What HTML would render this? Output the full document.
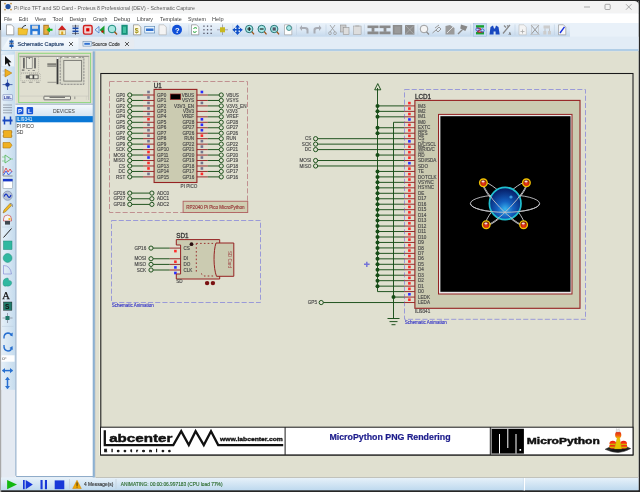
<!DOCTYPE html>
<html><head><meta charset="utf-8"><style>
html,body{margin:0;padding:0;background:#262626;}
svg{display:block;font-family:"Liberation Sans", sans-serif;will-change:transform;}
</style></head><body>
<svg width="640" height="492" viewBox="0 0 640 492">
<rect x="0" y="0" width="640" height="492" fill="#262626" />
<rect x="1" y="1" width="637.5" height="489" fill="#eef3f9" />
<rect x="1" y="1" width="637.5" height="12.5" fill="#f3f3f3" />
<path d="M634.5,1 H638.5 V5 Q638.5,1 634.5,1 Z" fill="#262626"/>
<text x="14" y="9.6" font-size="5.3" fill="#5a5a5a" text-anchor="start" textLength="181" lengthAdjust="spacingAndGlyphs" >Pi Pico TFT and SD Card - Proteus 8 Professional (DEV) - Schematic Capture</text>
<circle cx="8" cy="6.6" r="2.6" fill="#2050a0"/>
<circle cx="5" cy="3.5999999999999996" r="0.9" fill="#c09040"/>
<circle cx="11" cy="3.5999999999999996" r="0.9" fill="#c09040"/>
<circle cx="5" cy="9.6" r="0.9" fill="#c09040"/>
<circle cx="11" cy="9.6" r="0.9" fill="#c09040"/>
<line x1="584" y1="7" x2="590" y2="7" stroke="#777" stroke-width="0.6" />
<rect x="605" y="4.3" width="5.2" height="5.2" rx="0.8" fill="none" stroke="#777" stroke-width="0.6"/>
<line x1="626" y1="4.2" x2="631.5" y2="9.7" stroke="#777" stroke-width="0.6" />
<line x1="631.5" y1="4.2" x2="626" y2="9.7" stroke="#777" stroke-width="0.6" />
<rect x="1" y="13.5" width="637.5" height="9.5" fill="#ffffff" />
<text x="4" y="20.6" font-size="5.3" fill="#404040" text-anchor="start" textLength="8.2" lengthAdjust="spacingAndGlyphs" >File</text>
<text x="18.8" y="20.6" font-size="5.3" fill="#404040" text-anchor="start" textLength="9.2" lengthAdjust="spacingAndGlyphs" >Edit</text>
<text x="34.7" y="20.6" font-size="5.3" fill="#404040" text-anchor="start" textLength="11.299999999999997" lengthAdjust="spacingAndGlyphs" >View</text>
<text x="52.5" y="20.6" font-size="5.3" fill="#404040" text-anchor="start" textLength="10.5" lengthAdjust="spacingAndGlyphs" >Tool</text>
<text x="69.4" y="20.6" font-size="5.3" fill="#404040" text-anchor="start" textLength="16.89999999999999" lengthAdjust="spacingAndGlyphs" >Design</text>
<text x="92.9" y="20.6" font-size="5.3" fill="#404040" text-anchor="start" textLength="14.399999999999991" lengthAdjust="spacingAndGlyphs" >Graph</text>
<text x="113.8" y="20.6" font-size="5.3" fill="#404040" text-anchor="start" textLength="16.39999999999999" lengthAdjust="spacingAndGlyphs" >Debug</text>
<text x="136.8" y="20.6" font-size="5.3" fill="#404040" text-anchor="start" textLength="16.19999999999999" lengthAdjust="spacingAndGlyphs" >Library</text>
<text x="160" y="20.6" font-size="5.3" fill="#404040" text-anchor="start" textLength="21.599999999999994" lengthAdjust="spacingAndGlyphs" >Template</text>
<text x="188" y="20.6" font-size="5.3" fill="#404040" text-anchor="start" textLength="18" lengthAdjust="spacingAndGlyphs" >System</text>
<text x="212" y="20.6" font-size="5.3" fill="#404040" text-anchor="start" textLength="11.599999999999994" lengthAdjust="spacingAndGlyphs" >Help</text>
<defs><linearGradient id="tb" x1="0" y1="0" x2="0" y2="1"><stop offset="0" stop-color="#eaf2fa"/><stop offset="0.5" stop-color="#dde9f5"/><stop offset="1" stop-color="#c4d8ec"/></linearGradient></defs>
<rect x="1" y="23" width="637.5" height="28" fill="#e9f1f9" />
<rect x="1" y="36.7" width="637.5" height="12.5" fill="#e2ecf6" />
<rect x="1" y="23.2" width="569" height="13.5" fill="url(#tb)" />
<rect x="1" y="49" width="637.5" height="2.3" fill="#b0cde6" />
<defs><linearGradient id="at" x1="0" y1="0" x2="0" y2="1"><stop offset="0" stop-color="#f8fbfe"/><stop offset="1" stop-color="#e8f1f9"/></linearGradient></defs>
<path d="M1.2,50 L9,38 L78.4,38 L78.4,50 Z" fill="url(#at)"/>
<rect x="79" y="38.6" width="55.2" height="10.4" rx="1.2" fill="#e6ebf1"/>
<text x="17.5" y="46.3" font-size="5.4" fill="#1d3a66" text-anchor="start" textLength="46.5" lengthAdjust="spacingAndGlyphs"  stroke="#1d3a66" stroke-width="0.15">Schematic Capture</text>
<text x="92" y="46.3" font-size="5.4" fill="#333" text-anchor="start" textLength="28" lengthAdjust="spacingAndGlyphs"  stroke="#333" stroke-width="0.12">Source Code</text>
<line x1="69" y1="42" x2="73" y2="46" stroke="#333" stroke-width="0.8" />
<line x1="73" y1="42" x2="69" y2="46" stroke="#333" stroke-width="0.8" />
<line x1="125" y1="42" x2="129" y2="46" stroke="#333" stroke-width="0.8" />
<line x1="129" y1="42" x2="125" y2="46" stroke="#333" stroke-width="0.8" />
<defs><linearGradient id="lc" x1="0" y1="0" x2="1" y2="0"><stop offset="0" stop-color="#e6f0f8"/><stop offset="1" stop-color="#c6dcee"/></linearGradient><linearGradient id="dh" x1="0" y1="0" x2="0" y2="1"><stop offset="0" stop-color="#f4f8fc"/><stop offset="1" stop-color="#d4e4f2"/></linearGradient></defs>
<rect x="0" y="51.3" width="15.4" height="426.7" fill="#e4eaf2" />
<rect x="0" y="30" width="1.2" height="462" fill="#a8a8a8" />
<rect x="1.2" y="51.3" width="13.8" height="338.5" fill="url(#lc)" />
<rect x="15" y="51.3" width="80.6" height="426.7" fill="#e9eef4" />
<rect x="15.4" y="51.5" width="78.2" height="51.9" fill="#e0dfd0" />
<rect x="18.7" y="53.3" width="71.9" height="49.3" fill="none" stroke="#88d878" stroke-width="0.9"/>
<rect x="15.4" y="103.4" width="78.2" height="1.6" fill="#b8c6d4" />
<rect x="15.6" y="105" width="77.7" height="11" fill="url(#dh)" />
<rect x="16.9" y="107.1" width="6.5" height="7.2" rx="1" fill="#1a56d8"/><rect x="26.6" y="107.1" width="6.5" height="7.2" rx="1" fill="#1a56d8"/>
<text x="18.1" y="113.1" font-size="6" fill="#fff" text-anchor="start" font-weight="bold">P</text>
<text x="28.1" y="113.1" font-size="6" fill="#fff" text-anchor="start" font-weight="bold">L</text>
<text x="52.9" y="113.3" font-size="5.2" fill="#444" text-anchor="start" textLength="22" lengthAdjust="spacingAndGlyphs" >DEVICES</text>
<rect x="15.6" y="116" width="77.7" height="361" fill="#ffffff" />
<rect x="15.6" y="116.1" width="77.7" height="6.2" fill="#0a78d6" />
<text x="16.5" y="121.3" font-size="4.8" fill="#fff" text-anchor="start" textLength="16" lengthAdjust="spacingAndGlyphs" >ILI9341</text>
<text x="16.5" y="127.8" font-size="4.8" fill="#333" text-anchor="start" textLength="17.5" lengthAdjust="spacingAndGlyphs" >PI PICO</text>
<text x="16.5" y="134.3" font-size="4.8" fill="#333" text-anchor="start" textLength="7" lengthAdjust="spacingAndGlyphs" >SD</text>
<path d="M15.9,116 V475.5 Q15.9,476.6 17,476.6 H93" fill="none" stroke="#84a4c4" stroke-width="1"/>
<rect x="15.4" y="477.1" width="78" height="0.9" fill="#e4eaf2" />
<rect x="92.7" y="51.3" width="2.2" height="426.7" fill="#8cb0d2" />
<rect x="94.9" y="51.3" width="0.8" height="426.7" fill="#c4c0b4" />
<rect x="95.7" y="51.3" width="542.8" height="426.7" fill="#e0e0d0" />
<line x1="99.6" y1="73.5" x2="99.6" y2="455.4" stroke="#f2f2e4" stroke-width="1" />
<rect x="100.8" y="73.5" width="532.2" height="381.6" fill="none" stroke="#1a1a1a" stroke-width="1.05"/>
<rect x="109.5" y="81.5" width="138.0" height="131.0" fill="none" stroke="#c09090" stroke-width="1" stroke-dasharray="5.1 2.1"/>
<text x="153.8" y="88.1" font-size="6.7" fill="#333" text-anchor="start" textLength="7.9" lengthAdjust="spacingAndGlyphs"  stroke="#333" stroke-width="0.3">U1</text>
<rect x="154.1" y="89.4" width="42.8" height="93.1" fill="#cbcbb1" stroke="#952222" stroke-width="1.1"/>
<rect x="170.3" y="94" width="10.4" height="5.4" fill="#000" stroke="#952222" stroke-width="0.7"/>
<circle cx="129.75" cy="95.0" r="2.1" fill="none" stroke="#164c16" stroke-width="0.95"/>
<line x1="131.85" y1="95.0" x2="143" y2="95.0" stroke="#164c16" stroke-width="0.95" />
<line x1="143" y1="95.0" x2="154.1" y2="95.0" stroke="#952222" stroke-width="0.95" />
<rect x="147.2" y="90.7" width="2.6" height="2.6" fill="#74748e" />
<text x="125.2" y="96.6" font-size="4.6" fill="#4a4a4a" text-anchor="end"  stroke="#4a4a4a" stroke-width="0.14">GP0</text>
<text x="157" y="96.6" font-size="4.6" fill="#4a4a4a" text-anchor="start"  stroke="#4a4a4a" stroke-width="0.14">GP0</text>
<circle cx="221.25" cy="95.0" r="2.1" fill="none" stroke="#164c16" stroke-width="0.95"/>
<line x1="196.9" y1="95.0" x2="207.8" y2="95.0" stroke="#952222" stroke-width="0.95" />
<line x1="207.8" y1="95.0" x2="219.15" y2="95.0" stroke="#164c16" stroke-width="0.95" />
<rect x="200.6" y="90.7" width="2.6" height="2.6" fill="#2a2aff" />
<text x="194.2" y="96.6" font-size="4.6" fill="#4a4a4a" text-anchor="end"  stroke="#4a4a4a" stroke-width="0.14">VBUS</text>
<text x="226.3" y="96.6" font-size="4.6" fill="#4a4a4a" text-anchor="start"  stroke="#4a4a4a" stroke-width="0.14">VBUS</text>
<circle cx="129.75" cy="100.46" r="2.1" fill="none" stroke="#164c16" stroke-width="0.95"/>
<line x1="131.85" y1="100.46" x2="143" y2="100.46" stroke="#164c16" stroke-width="0.95" />
<line x1="143" y1="100.46" x2="154.1" y2="100.46" stroke="#952222" stroke-width="0.95" />
<rect x="147.2" y="96.16" width="2.6" height="2.6" fill="#74748e" />
<text x="125.2" y="102.05999999999999" font-size="4.6" fill="#4a4a4a" text-anchor="end"  stroke="#4a4a4a" stroke-width="0.14">GP1</text>
<text x="157" y="102.05999999999999" font-size="4.6" fill="#4a4a4a" text-anchor="start"  stroke="#4a4a4a" stroke-width="0.14">GP1</text>
<circle cx="221.25" cy="100.46" r="2.1" fill="none" stroke="#164c16" stroke-width="0.95"/>
<line x1="196.9" y1="100.46" x2="207.8" y2="100.46" stroke="#952222" stroke-width="0.95" />
<line x1="207.8" y1="100.46" x2="219.15" y2="100.46" stroke="#164c16" stroke-width="0.95" />
<text x="194.2" y="102.05999999999999" font-size="4.6" fill="#4a4a4a" text-anchor="end"  stroke="#4a4a4a" stroke-width="0.14">VSYS</text>
<text x="226.3" y="102.05999999999999" font-size="4.6" fill="#4a4a4a" text-anchor="start"  stroke="#4a4a4a" stroke-width="0.14">VSYS</text>
<circle cx="129.75" cy="105.92" r="2.1" fill="none" stroke="#164c16" stroke-width="0.95"/>
<line x1="131.85" y1="105.92" x2="143" y2="105.92" stroke="#164c16" stroke-width="0.95" />
<line x1="143" y1="105.92" x2="154.1" y2="105.92" stroke="#952222" stroke-width="0.95" />
<rect x="147.2" y="101.62" width="2.6" height="2.6" fill="#74748e" />
<text x="125.2" y="107.52" font-size="4.6" fill="#4a4a4a" text-anchor="end"  stroke="#4a4a4a" stroke-width="0.14">GP2</text>
<text x="157" y="107.52" font-size="4.6" fill="#4a4a4a" text-anchor="start"  stroke="#4a4a4a" stroke-width="0.14">GP2</text>
<circle cx="221.25" cy="105.92" r="2.1" fill="none" stroke="#164c16" stroke-width="0.95"/>
<line x1="196.9" y1="105.92" x2="207.8" y2="105.92" stroke="#952222" stroke-width="0.95" />
<line x1="207.8" y1="105.92" x2="219.15" y2="105.92" stroke="#164c16" stroke-width="0.95" />
<rect x="200.6" y="101.62" width="2.6" height="2.6" fill="#74748e" />
<text x="194.2" y="107.52" font-size="4.6" fill="#4a4a4a" text-anchor="end"  stroke="#4a4a4a" stroke-width="0.14">V3V3_EN</text>
<text x="226.3" y="107.52" font-size="4.6" fill="#4a4a4a" text-anchor="start"  stroke="#4a4a4a" stroke-width="0.14">V3V3_EN</text>
<circle cx="129.75" cy="111.38" r="2.1" fill="none" stroke="#164c16" stroke-width="0.95"/>
<line x1="131.85" y1="111.38" x2="143" y2="111.38" stroke="#164c16" stroke-width="0.95" />
<line x1="143" y1="111.38" x2="154.1" y2="111.38" stroke="#952222" stroke-width="0.95" />
<rect x="147.2" y="107.08" width="2.6" height="2.6" fill="#74748e" />
<text x="125.2" y="112.97999999999999" font-size="4.6" fill="#4a4a4a" text-anchor="end"  stroke="#4a4a4a" stroke-width="0.14">GP3</text>
<text x="157" y="112.97999999999999" font-size="4.6" fill="#4a4a4a" text-anchor="start"  stroke="#4a4a4a" stroke-width="0.14">GP3</text>
<circle cx="221.25" cy="111.38" r="2.1" fill="none" stroke="#164c16" stroke-width="0.95"/>
<line x1="196.9" y1="111.38" x2="207.8" y2="111.38" stroke="#952222" stroke-width="0.95" />
<line x1="207.8" y1="111.38" x2="219.15" y2="111.38" stroke="#164c16" stroke-width="0.95" />
<text x="194.2" y="112.97999999999999" font-size="4.6" fill="#4a4a4a" text-anchor="end"  stroke="#4a4a4a" stroke-width="0.14">V3V3</text>
<text x="226.3" y="112.97999999999999" font-size="4.6" fill="#4a4a4a" text-anchor="start"  stroke="#4a4a4a" stroke-width="0.14">V3V3</text>
<circle cx="129.75" cy="116.84" r="2.1" fill="none" stroke="#164c16" stroke-width="0.95"/>
<line x1="131.85" y1="116.84" x2="143" y2="116.84" stroke="#164c16" stroke-width="0.95" />
<line x1="143" y1="116.84" x2="154.1" y2="116.84" stroke="#952222" stroke-width="0.95" />
<rect x="147.2" y="112.54" width="2.6" height="2.6" fill="#74748e" />
<text x="125.2" y="118.44" font-size="4.6" fill="#4a4a4a" text-anchor="end"  stroke="#4a4a4a" stroke-width="0.14">GP4</text>
<text x="157" y="118.44" font-size="4.6" fill="#4a4a4a" text-anchor="start"  stroke="#4a4a4a" stroke-width="0.14">GP4</text>
<circle cx="221.25" cy="116.84" r="2.1" fill="none" stroke="#164c16" stroke-width="0.95"/>
<line x1="196.9" y1="116.84" x2="207.8" y2="116.84" stroke="#952222" stroke-width="0.95" />
<line x1="207.8" y1="116.84" x2="219.15" y2="116.84" stroke="#164c16" stroke-width="0.95" />
<text x="194.2" y="118.44" font-size="4.6" fill="#4a4a4a" text-anchor="end"  stroke="#4a4a4a" stroke-width="0.14">VREF</text>
<text x="226.3" y="118.44" font-size="4.6" fill="#4a4a4a" text-anchor="start"  stroke="#4a4a4a" stroke-width="0.14">VREF</text>
<circle cx="129.75" cy="122.3" r="2.1" fill="none" stroke="#164c16" stroke-width="0.95"/>
<line x1="131.85" y1="122.3" x2="143" y2="122.3" stroke="#164c16" stroke-width="0.95" />
<line x1="143" y1="122.3" x2="154.1" y2="122.3" stroke="#952222" stroke-width="0.95" />
<rect x="147.2" y="118.0" width="2.6" height="2.6" fill="#ff2a2a" />
<text x="125.2" y="123.89999999999999" font-size="4.6" fill="#4a4a4a" text-anchor="end"  stroke="#4a4a4a" stroke-width="0.14">GP5</text>
<text x="157" y="123.89999999999999" font-size="4.6" fill="#4a4a4a" text-anchor="start"  stroke="#4a4a4a" stroke-width="0.14">GP5</text>
<circle cx="221.25" cy="122.3" r="2.1" fill="none" stroke="#164c16" stroke-width="0.95"/>
<line x1="196.9" y1="122.3" x2="207.8" y2="122.3" stroke="#952222" stroke-width="0.95" />
<line x1="207.8" y1="122.3" x2="219.15" y2="122.3" stroke="#164c16" stroke-width="0.95" />
<rect x="200.6" y="118.0" width="2.6" height="2.6" fill="#2a2aff" />
<text x="194.2" y="123.89999999999999" font-size="4.6" fill="#4a4a4a" text-anchor="end"  stroke="#4a4a4a" stroke-width="0.14">GP28</text>
<text x="226.3" y="123.89999999999999" font-size="4.6" fill="#4a4a4a" text-anchor="start"  stroke="#4a4a4a" stroke-width="0.14">GP28</text>
<circle cx="129.75" cy="127.75999999999999" r="2.1" fill="none" stroke="#164c16" stroke-width="0.95"/>
<line x1="131.85" y1="127.75999999999999" x2="143" y2="127.75999999999999" stroke="#164c16" stroke-width="0.95" />
<line x1="143" y1="127.75999999999999" x2="154.1" y2="127.75999999999999" stroke="#952222" stroke-width="0.95" />
<rect x="147.2" y="123.46" width="2.6" height="2.6" fill="#74748e" />
<text x="125.2" y="129.35999999999999" font-size="4.6" fill="#4a4a4a" text-anchor="end"  stroke="#4a4a4a" stroke-width="0.14">GP6</text>
<text x="157" y="129.35999999999999" font-size="4.6" fill="#4a4a4a" text-anchor="start"  stroke="#4a4a4a" stroke-width="0.14">GP6</text>
<circle cx="221.25" cy="127.75999999999999" r="2.1" fill="none" stroke="#164c16" stroke-width="0.95"/>
<line x1="196.9" y1="127.75999999999999" x2="207.8" y2="127.75999999999999" stroke="#952222" stroke-width="0.95" />
<line x1="207.8" y1="127.75999999999999" x2="219.15" y2="127.75999999999999" stroke="#164c16" stroke-width="0.95" />
<rect x="200.6" y="123.46" width="2.6" height="2.6" fill="#2a2aff" />
<text x="194.2" y="129.35999999999999" font-size="4.6" fill="#4a4a4a" text-anchor="end"  stroke="#4a4a4a" stroke-width="0.14">GP27</text>
<text x="226.3" y="129.35999999999999" font-size="4.6" fill="#4a4a4a" text-anchor="start"  stroke="#4a4a4a" stroke-width="0.14">GP27</text>
<circle cx="129.75" cy="133.22" r="2.1" fill="none" stroke="#164c16" stroke-width="0.95"/>
<line x1="131.85" y1="133.22" x2="143" y2="133.22" stroke="#164c16" stroke-width="0.95" />
<line x1="143" y1="133.22" x2="154.1" y2="133.22" stroke="#952222" stroke-width="0.95" />
<rect x="147.2" y="128.92" width="2.6" height="2.6" fill="#74748e" />
<text x="125.2" y="134.82" font-size="4.6" fill="#4a4a4a" text-anchor="end"  stroke="#4a4a4a" stroke-width="0.14">GP7</text>
<text x="157" y="134.82" font-size="4.6" fill="#4a4a4a" text-anchor="start"  stroke="#4a4a4a" stroke-width="0.14">GP7</text>
<circle cx="221.25" cy="133.22" r="2.1" fill="none" stroke="#164c16" stroke-width="0.95"/>
<line x1="196.9" y1="133.22" x2="207.8" y2="133.22" stroke="#952222" stroke-width="0.95" />
<line x1="207.8" y1="133.22" x2="219.15" y2="133.22" stroke="#164c16" stroke-width="0.95" />
<rect x="200.6" y="128.92" width="2.6" height="2.6" fill="#2a2aff" />
<text x="194.2" y="134.82" font-size="4.6" fill="#4a4a4a" text-anchor="end"  stroke="#4a4a4a" stroke-width="0.14">GP26</text>
<text x="226.3" y="134.82" font-size="4.6" fill="#4a4a4a" text-anchor="start"  stroke="#4a4a4a" stroke-width="0.14">GP26</text>
<circle cx="129.75" cy="138.68" r="2.1" fill="none" stroke="#164c16" stroke-width="0.95"/>
<line x1="131.85" y1="138.68" x2="143" y2="138.68" stroke="#164c16" stroke-width="0.95" />
<line x1="143" y1="138.68" x2="154.1" y2="138.68" stroke="#952222" stroke-width="0.95" />
<rect x="147.2" y="134.38" width="2.6" height="2.6" fill="#74748e" />
<text x="125.2" y="140.28" font-size="4.6" fill="#4a4a4a" text-anchor="end"  stroke="#4a4a4a" stroke-width="0.14">GP8</text>
<text x="157" y="140.28" font-size="4.6" fill="#4a4a4a" text-anchor="start"  stroke="#4a4a4a" stroke-width="0.14">GP8</text>
<circle cx="221.25" cy="138.68" r="2.1" fill="none" stroke="#164c16" stroke-width="0.95"/>
<line x1="196.9" y1="138.68" x2="207.8" y2="138.68" stroke="#952222" stroke-width="0.95" />
<line x1="207.8" y1="138.68" x2="219.15" y2="138.68" stroke="#164c16" stroke-width="0.95" />
<rect x="200.6" y="134.38" width="2.6" height="2.6" fill="#ff2a2a" />
<text x="194.2" y="140.28" font-size="4.6" fill="#4a4a4a" text-anchor="end"  stroke="#4a4a4a" stroke-width="0.14">RUN</text>
<text x="226.3" y="140.28" font-size="4.6" fill="#4a4a4a" text-anchor="start"  stroke="#4a4a4a" stroke-width="0.14">RUN</text>
<circle cx="129.75" cy="144.14" r="2.1" fill="none" stroke="#164c16" stroke-width="0.95"/>
<line x1="131.85" y1="144.14" x2="143" y2="144.14" stroke="#164c16" stroke-width="0.95" />
<line x1="143" y1="144.14" x2="154.1" y2="144.14" stroke="#952222" stroke-width="0.95" />
<rect x="147.2" y="139.83999999999997" width="2.6" height="2.6" fill="#74748e" />
<text x="125.2" y="145.73999999999998" font-size="4.6" fill="#4a4a4a" text-anchor="end"  stroke="#4a4a4a" stroke-width="0.14">GP9</text>
<text x="157" y="145.73999999999998" font-size="4.6" fill="#4a4a4a" text-anchor="start"  stroke="#4a4a4a" stroke-width="0.14">GP9</text>
<circle cx="221.25" cy="144.14" r="2.1" fill="none" stroke="#164c16" stroke-width="0.95"/>
<line x1="196.9" y1="144.14" x2="207.8" y2="144.14" stroke="#952222" stroke-width="0.95" />
<line x1="207.8" y1="144.14" x2="219.15" y2="144.14" stroke="#164c16" stroke-width="0.95" />
<rect x="200.6" y="139.83999999999997" width="2.6" height="2.6" fill="#74748e" />
<text x="194.2" y="145.73999999999998" font-size="4.6" fill="#4a4a4a" text-anchor="end"  stroke="#4a4a4a" stroke-width="0.14">GP22</text>
<text x="226.3" y="145.73999999999998" font-size="4.6" fill="#4a4a4a" text-anchor="start"  stroke="#4a4a4a" stroke-width="0.14">GP22</text>
<circle cx="129.75" cy="149.6" r="2.1" fill="none" stroke="#164c16" stroke-width="0.95"/>
<line x1="131.85" y1="149.6" x2="143" y2="149.6" stroke="#164c16" stroke-width="0.95" />
<line x1="143" y1="149.6" x2="154.1" y2="149.6" stroke="#952222" stroke-width="0.95" />
<rect x="147.2" y="145.29999999999998" width="2.6" height="2.6" fill="#2a2aff" />
<text x="125.2" y="151.2" font-size="4.6" fill="#4a4a4a" text-anchor="end"  stroke="#4a4a4a" stroke-width="0.14">SCK</text>
<text x="157" y="151.2" font-size="4.6" fill="#4a4a4a" text-anchor="start"  stroke="#4a4a4a" stroke-width="0.14">GP10</text>
<circle cx="221.25" cy="149.6" r="2.1" fill="none" stroke="#164c16" stroke-width="0.95"/>
<line x1="196.9" y1="149.6" x2="207.8" y2="149.6" stroke="#952222" stroke-width="0.95" />
<line x1="207.8" y1="149.6" x2="219.15" y2="149.6" stroke="#164c16" stroke-width="0.95" />
<rect x="200.6" y="145.29999999999998" width="2.6" height="2.6" fill="#74748e" />
<text x="194.2" y="151.2" font-size="4.6" fill="#4a4a4a" text-anchor="end"  stroke="#4a4a4a" stroke-width="0.14">GP21</text>
<text x="226.3" y="151.2" font-size="4.6" fill="#4a4a4a" text-anchor="start"  stroke="#4a4a4a" stroke-width="0.14">GP21</text>
<circle cx="129.75" cy="155.06" r="2.1" fill="none" stroke="#164c16" stroke-width="0.95"/>
<line x1="131.85" y1="155.06" x2="143" y2="155.06" stroke="#164c16" stroke-width="0.95" />
<line x1="143" y1="155.06" x2="154.1" y2="155.06" stroke="#952222" stroke-width="0.95" />
<rect x="147.2" y="150.76" width="2.6" height="2.6" fill="#ff2a2a" />
<text x="125.2" y="156.66" font-size="4.6" fill="#4a4a4a" text-anchor="end"  stroke="#4a4a4a" stroke-width="0.14">MOSI</text>
<text x="157" y="156.66" font-size="4.6" fill="#4a4a4a" text-anchor="start"  stroke="#4a4a4a" stroke-width="0.14">GP11</text>
<circle cx="221.25" cy="155.06" r="2.1" fill="none" stroke="#164c16" stroke-width="0.95"/>
<line x1="196.9" y1="155.06" x2="207.8" y2="155.06" stroke="#952222" stroke-width="0.95" />
<line x1="207.8" y1="155.06" x2="219.15" y2="155.06" stroke="#164c16" stroke-width="0.95" />
<rect x="200.6" y="150.76" width="2.6" height="2.6" fill="#74748e" />
<text x="194.2" y="156.66" font-size="4.6" fill="#4a4a4a" text-anchor="end"  stroke="#4a4a4a" stroke-width="0.14">GP20</text>
<text x="226.3" y="156.66" font-size="4.6" fill="#4a4a4a" text-anchor="start"  stroke="#4a4a4a" stroke-width="0.14">GP20</text>
<circle cx="129.75" cy="160.51999999999998" r="2.1" fill="none" stroke="#164c16" stroke-width="0.95"/>
<line x1="131.85" y1="160.51999999999998" x2="143" y2="160.51999999999998" stroke="#164c16" stroke-width="0.95" />
<line x1="143" y1="160.51999999999998" x2="154.1" y2="160.51999999999998" stroke="#952222" stroke-width="0.95" />
<rect x="147.2" y="156.21999999999997" width="2.6" height="2.6" fill="#2a2aff" />
<text x="125.2" y="162.11999999999998" font-size="4.6" fill="#4a4a4a" text-anchor="end"  stroke="#4a4a4a" stroke-width="0.14">MISO</text>
<text x="157" y="162.11999999999998" font-size="4.6" fill="#4a4a4a" text-anchor="start"  stroke="#4a4a4a" stroke-width="0.14">GP12</text>
<circle cx="221.25" cy="160.51999999999998" r="2.1" fill="none" stroke="#164c16" stroke-width="0.95"/>
<line x1="196.9" y1="160.51999999999998" x2="207.8" y2="160.51999999999998" stroke="#952222" stroke-width="0.95" />
<line x1="207.8" y1="160.51999999999998" x2="219.15" y2="160.51999999999998" stroke="#164c16" stroke-width="0.95" />
<rect x="200.6" y="156.21999999999997" width="2.6" height="2.6" fill="#74748e" />
<text x="194.2" y="162.11999999999998" font-size="4.6" fill="#4a4a4a" text-anchor="end"  stroke="#4a4a4a" stroke-width="0.14">GP19</text>
<text x="226.3" y="162.11999999999998" font-size="4.6" fill="#4a4a4a" text-anchor="start"  stroke="#4a4a4a" stroke-width="0.14">GP19</text>
<circle cx="129.75" cy="165.98000000000002" r="2.1" fill="none" stroke="#164c16" stroke-width="0.95"/>
<line x1="131.85" y1="165.98000000000002" x2="143" y2="165.98000000000002" stroke="#164c16" stroke-width="0.95" />
<line x1="143" y1="165.98000000000002" x2="154.1" y2="165.98000000000002" stroke="#952222" stroke-width="0.95" />
<rect x="147.2" y="161.68" width="2.6" height="2.6" fill="#ff2a2a" />
<text x="125.2" y="167.58" font-size="4.6" fill="#4a4a4a" text-anchor="end"  stroke="#4a4a4a" stroke-width="0.14">CS</text>
<text x="157" y="167.58" font-size="4.6" fill="#4a4a4a" text-anchor="start"  stroke="#4a4a4a" stroke-width="0.14">GP13</text>
<circle cx="221.25" cy="165.98000000000002" r="2.1" fill="none" stroke="#164c16" stroke-width="0.95"/>
<line x1="196.9" y1="165.98000000000002" x2="207.8" y2="165.98000000000002" stroke="#952222" stroke-width="0.95" />
<line x1="207.8" y1="165.98000000000002" x2="219.15" y2="165.98000000000002" stroke="#164c16" stroke-width="0.95" />
<rect x="200.6" y="161.68" width="2.6" height="2.6" fill="#74748e" />
<text x="194.2" y="167.58" font-size="4.6" fill="#4a4a4a" text-anchor="end"  stroke="#4a4a4a" stroke-width="0.14">GP18</text>
<text x="226.3" y="167.58" font-size="4.6" fill="#4a4a4a" text-anchor="start"  stroke="#4a4a4a" stroke-width="0.14">GP18</text>
<circle cx="129.75" cy="171.44" r="2.1" fill="none" stroke="#164c16" stroke-width="0.95"/>
<line x1="131.85" y1="171.44" x2="143" y2="171.44" stroke="#164c16" stroke-width="0.95" />
<line x1="143" y1="171.44" x2="154.1" y2="171.44" stroke="#952222" stroke-width="0.95" />
<rect x="147.2" y="167.14" width="2.6" height="2.6" fill="#ff2a2a" />
<text x="125.2" y="173.04" font-size="4.6" fill="#4a4a4a" text-anchor="end"  stroke="#4a4a4a" stroke-width="0.14">DC</text>
<text x="157" y="173.04" font-size="4.6" fill="#4a4a4a" text-anchor="start"  stroke="#4a4a4a" stroke-width="0.14">GP14</text>
<circle cx="221.25" cy="171.44" r="2.1" fill="none" stroke="#164c16" stroke-width="0.95"/>
<line x1="196.9" y1="171.44" x2="207.8" y2="171.44" stroke="#952222" stroke-width="0.95" />
<line x1="207.8" y1="171.44" x2="219.15" y2="171.44" stroke="#164c16" stroke-width="0.95" />
<rect x="200.6" y="167.14" width="2.6" height="2.6" fill="#74748e" />
<text x="194.2" y="173.04" font-size="4.6" fill="#4a4a4a" text-anchor="end"  stroke="#4a4a4a" stroke-width="0.14">GP17</text>
<text x="226.3" y="173.04" font-size="4.6" fill="#4a4a4a" text-anchor="start"  stroke="#4a4a4a" stroke-width="0.14">GP17</text>
<circle cx="129.75" cy="176.9" r="2.1" fill="none" stroke="#164c16" stroke-width="0.95"/>
<line x1="131.85" y1="176.9" x2="143" y2="176.9" stroke="#164c16" stroke-width="0.95" />
<line x1="143" y1="176.9" x2="154.1" y2="176.9" stroke="#952222" stroke-width="0.95" />
<rect x="147.2" y="172.6" width="2.6" height="2.6" fill="#74748e" />
<text x="125.2" y="178.5" font-size="4.6" fill="#4a4a4a" text-anchor="end"  stroke="#4a4a4a" stroke-width="0.14">RST</text>
<text x="157" y="178.5" font-size="4.6" fill="#4a4a4a" text-anchor="start"  stroke="#4a4a4a" stroke-width="0.14">GP15</text>
<circle cx="221.25" cy="176.9" r="2.1" fill="none" stroke="#164c16" stroke-width="0.95"/>
<line x1="196.9" y1="176.9" x2="207.8" y2="176.9" stroke="#952222" stroke-width="0.95" />
<line x1="207.8" y1="176.9" x2="219.15" y2="176.9" stroke="#164c16" stroke-width="0.95" />
<rect x="200.6" y="172.6" width="2.6" height="2.6" fill="#ff2a2a" />
<text x="194.2" y="178.5" font-size="4.6" fill="#4a4a4a" text-anchor="end"  stroke="#4a4a4a" stroke-width="0.14">GP16</text>
<text x="226.3" y="178.5" font-size="4.6" fill="#4a4a4a" text-anchor="start"  stroke="#4a4a4a" stroke-width="0.14">GP16</text>
<text x="180.6" y="188.3" font-size="4.6" fill="#4a4a4a" text-anchor="start"  stroke="#4a4a4a" stroke-width="0.14">PI PICO</text>
<circle cx="129.75" cy="193.1" r="2.1" fill="none" stroke="#164c16" stroke-width="0.95"/>
<circle cx="151.9" cy="193.1" r="2.1" fill="none" stroke="#164c16" stroke-width="0.95"/>
<line x1="131.85" y1="193.1" x2="149.8" y2="193.1" stroke="#164c16" stroke-width="0.95" />
<text x="125.2" y="194.7" font-size="4.6" fill="#4a4a4a" text-anchor="end"  stroke="#4a4a4a" stroke-width="0.14">GP26</text>
<text x="156.9" y="194.7" font-size="4.6" fill="#4a4a4a" text-anchor="start"  stroke="#4a4a4a" stroke-width="0.14">ADC0</text>
<circle cx="129.75" cy="198.75" r="2.1" fill="none" stroke="#164c16" stroke-width="0.95"/>
<circle cx="151.9" cy="198.75" r="2.1" fill="none" stroke="#164c16" stroke-width="0.95"/>
<line x1="131.85" y1="198.75" x2="149.8" y2="198.75" stroke="#164c16" stroke-width="0.95" />
<text x="125.2" y="200.35" font-size="4.6" fill="#4a4a4a" text-anchor="end"  stroke="#4a4a4a" stroke-width="0.14">GP27</text>
<text x="156.9" y="200.35" font-size="4.6" fill="#4a4a4a" text-anchor="start"  stroke="#4a4a4a" stroke-width="0.14">ADC1</text>
<circle cx="129.75" cy="204.4" r="2.1" fill="none" stroke="#164c16" stroke-width="0.95"/>
<circle cx="151.9" cy="204.4" r="2.1" fill="none" stroke="#164c16" stroke-width="0.95"/>
<line x1="131.85" y1="204.4" x2="149.8" y2="204.4" stroke="#164c16" stroke-width="0.95" />
<text x="125.2" y="206.0" font-size="4.6" fill="#4a4a4a" text-anchor="end"  stroke="#4a4a4a" stroke-width="0.14">GP28</text>
<text x="156.9" y="206.0" font-size="4.6" fill="#4a4a4a" text-anchor="start"  stroke="#4a4a4a" stroke-width="0.14">ADC2</text>
<rect x="183.1" y="201.25" width="64.65" height="11.25" fill="#d0ceb2" stroke="#b06060" stroke-width="0.9"/>
<text x="186.3" y="208.6" font-size="4.6" fill="#983838" text-anchor="start" textLength="58.3" lengthAdjust="spacingAndGlyphs"  stroke="#983838" stroke-width="0.14">RP2040 Pi Pico MicroPython</text>
<rect x="111.5" y="220.5" width="149.0" height="82.0" fill="none" stroke="#9a9ad8" stroke-width="1" stroke-dasharray="5.1 2.1"/>
<text x="176.2" y="238.2" font-size="6.7" fill="#333" text-anchor="start" textLength="12.3" lengthAdjust="spacingAndGlyphs"  stroke="#333" stroke-width="0.3">SD1</text>
<circle cx="151" cy="248.1" r="2.1" fill="none" stroke="#164c16" stroke-width="0.95"/>
<line x1="153.1" y1="248.1" x2="169.75" y2="248.1" stroke="#164c16" stroke-width="0.95" />
<line x1="169.75" y1="248.1" x2="180.6" y2="248.1" stroke="#952222" stroke-width="0.95" />
<rect x="174.1" y="249.79999999999998" width="2.6" height="2.6" fill="#ff2a2a" />
<text x="146.2" y="249.7" font-size="4.6" fill="#4a4a4a" text-anchor="end"  stroke="#4a4a4a" stroke-width="0.14">GP16</text>
<circle cx="151" cy="258.75" r="2.1" fill="none" stroke="#164c16" stroke-width="0.95"/>
<line x1="153.1" y1="258.75" x2="169.75" y2="258.75" stroke="#164c16" stroke-width="0.95" />
<line x1="169.75" y1="258.75" x2="180.6" y2="258.75" stroke="#952222" stroke-width="0.95" />
<rect x="174.1" y="260.45" width="2.6" height="2.6" fill="#ff2a2a" />
<text x="146.2" y="260.35" font-size="4.6" fill="#4a4a4a" text-anchor="end"  stroke="#4a4a4a" stroke-width="0.14">MOSI</text>
<circle cx="151" cy="264.4" r="2.1" fill="none" stroke="#164c16" stroke-width="0.95"/>
<line x1="153.1" y1="264.4" x2="169.75" y2="264.4" stroke="#164c16" stroke-width="0.95" />
<line x1="169.75" y1="264.4" x2="180.6" y2="264.4" stroke="#952222" stroke-width="0.95" />
<rect x="174.1" y="266.09999999999997" width="2.6" height="2.6" fill="#2a2aff" />
<text x="146.2" y="266.0" font-size="4.6" fill="#4a4a4a" text-anchor="end"  stroke="#4a4a4a" stroke-width="0.14">MISO</text>
<circle cx="151" cy="270" r="2.1" fill="none" stroke="#164c16" stroke-width="0.95"/>
<line x1="153.1" y1="270" x2="169.75" y2="270" stroke="#164c16" stroke-width="0.95" />
<line x1="169.75" y1="270" x2="180.6" y2="270" stroke="#952222" stroke-width="0.95" />
<rect x="174.1" y="271.7" width="2.6" height="2.6" fill="#2a2aff" />
<text x="146.2" y="271.6" font-size="4.6" fill="#4a4a4a" text-anchor="end"  stroke="#4a4a4a" stroke-width="0.14">SCK</text>
<path d="M176.3,239.6 H219.7 V279 H176.3 V274 H180.6 V245 H176.3 Z" fill="#cbcbb1" stroke="#952222" stroke-width="1"/>
<path d="M216,243 H233.8 V276.3 H216.5 C213.3,268 213.3,251 216,243 Z" fill="#cbcbb1" stroke="#952222" stroke-width="1"/>
<path d="M196.3,243.4 H214 M196.3,243.4 V272.5 M201,273.5 L204,276 H214" fill="none" stroke="#952222" stroke-width="0.9" stroke-dasharray="1.6 2.2"/>
<text x="183.5" y="249.7" font-size="4.6" fill="#4a4a4a" text-anchor="start"  stroke="#4a4a4a" stroke-width="0.14">CS</text>
<text x="183.5" y="260.35" font-size="4.6" fill="#4a4a4a" text-anchor="start"  stroke="#4a4a4a" stroke-width="0.14">DI</text>
<text x="183.5" y="266.0" font-size="4.6" fill="#4a4a4a" text-anchor="start"  stroke="#4a4a4a" stroke-width="0.14">DO</text>
<text x="183.5" y="271.6" font-size="4.6" fill="#4a4a4a" text-anchor="start"  stroke="#4a4a4a" stroke-width="0.14">CLK</text>
<circle cx="191.5" cy="244.2" r="1.9" fill="#2a1010"/>
<circle cx="207.1" cy="283.1" r="2.2" fill="#7a1010"/><circle cx="212.9" cy="283.1" r="2.2" fill="#7a1010"/>
<text x="176.3" y="283.4" font-size="4.6" fill="#4a4a4a" text-anchor="start"  stroke="#4a4a4a" stroke-width="0.14">SD</text>
<text x="0" y="0" font-size="4.6" fill="#a04848" transform="translate(228.3,251) rotate(90)" textLength="17" lengthAdjust="spacingAndGlyphs">SD Card</text>
<text x="111.8" y="306.6" font-size="4.6" fill="#3a3ac8" text-anchor="start" textLength="42" lengthAdjust="spacingAndGlyphs"  stroke="#3a3ac8" stroke-width="0.15">Schematic Animation</text>
<line x1="377.5" y1="105.9" x2="404.2" y2="105.9" stroke="#164c16" stroke-width="0.95" />
<circle cx="377.5" cy="105.9" r="2" fill="#164c16"/>
<line x1="377.5" y1="111.36200000000001" x2="404.2" y2="111.36200000000001" stroke="#164c16" stroke-width="0.95" />
<circle cx="377.5" cy="111.36200000000001" r="2" fill="#164c16"/>
<line x1="377.5" y1="116.82400000000001" x2="404.2" y2="116.82400000000001" stroke="#164c16" stroke-width="0.95" />
<circle cx="377.5" cy="116.82400000000001" r="2" fill="#164c16"/>
<line x1="377.5" y1="127.748" x2="404.2" y2="127.748" stroke="#164c16" stroke-width="0.95" />
<circle cx="377.5" cy="127.748" r="2" fill="#164c16"/>
<line x1="377.5" y1="133.21" x2="404.2" y2="133.21" stroke="#164c16" stroke-width="0.95" />
<circle cx="377.5" cy="133.21" r="2" fill="#164c16"/>
<line x1="377.5" y1="155.058" x2="404.2" y2="155.058" stroke="#164c16" stroke-width="0.95" />
<circle cx="377.5" cy="155.058" r="2" fill="#164c16"/>
<line x1="377.5" y1="171.44400000000002" x2="404.2" y2="171.44400000000002" stroke="#164c16" stroke-width="0.95" />
<circle cx="377.5" cy="171.44400000000002" r="2" fill="#164c16"/>
<line x1="377.5" y1="176.906" x2="404.2" y2="176.906" stroke="#164c16" stroke-width="0.95" />
<circle cx="377.5" cy="176.906" r="2" fill="#164c16"/>
<line x1="377.5" y1="182.368" x2="404.2" y2="182.368" stroke="#164c16" stroke-width="0.95" />
<circle cx="377.5" cy="182.368" r="2" fill="#164c16"/>
<line x1="377.5" y1="187.82999999999998" x2="404.2" y2="187.82999999999998" stroke="#164c16" stroke-width="0.95" />
<circle cx="377.5" cy="187.82999999999998" r="2" fill="#164c16"/>
<line x1="377.5" y1="193.292" x2="404.2" y2="193.292" stroke="#164c16" stroke-width="0.95" />
<circle cx="377.5" cy="193.292" r="2" fill="#164c16"/>
<line x1="377.5" y1="198.75400000000002" x2="404.2" y2="198.75400000000002" stroke="#164c16" stroke-width="0.95" />
<circle cx="377.5" cy="198.75400000000002" r="2" fill="#164c16"/>
<line x1="377.5" y1="204.216" x2="404.2" y2="204.216" stroke="#164c16" stroke-width="0.95" />
<circle cx="377.5" cy="204.216" r="2" fill="#164c16"/>
<line x1="377.5" y1="209.678" x2="404.2" y2="209.678" stroke="#164c16" stroke-width="0.95" />
<circle cx="377.5" cy="209.678" r="2" fill="#164c16"/>
<line x1="377.5" y1="215.14" x2="404.2" y2="215.14" stroke="#164c16" stroke-width="0.95" />
<circle cx="377.5" cy="215.14" r="2" fill="#164c16"/>
<line x1="377.5" y1="220.602" x2="404.2" y2="220.602" stroke="#164c16" stroke-width="0.95" />
<circle cx="377.5" cy="220.602" r="2" fill="#164c16"/>
<line x1="377.5" y1="226.064" x2="404.2" y2="226.064" stroke="#164c16" stroke-width="0.95" />
<circle cx="377.5" cy="226.064" r="2" fill="#164c16"/>
<line x1="377.5" y1="231.526" x2="404.2" y2="231.526" stroke="#164c16" stroke-width="0.95" />
<circle cx="377.5" cy="231.526" r="2" fill="#164c16"/>
<line x1="377.5" y1="236.988" x2="404.2" y2="236.988" stroke="#164c16" stroke-width="0.95" />
<circle cx="377.5" cy="236.988" r="2" fill="#164c16"/>
<line x1="377.5" y1="242.45" x2="404.2" y2="242.45" stroke="#164c16" stroke-width="0.95" />
<circle cx="377.5" cy="242.45" r="2" fill="#164c16"/>
<line x1="377.5" y1="247.912" x2="404.2" y2="247.912" stroke="#164c16" stroke-width="0.95" />
<circle cx="377.5" cy="247.912" r="2" fill="#164c16"/>
<line x1="377.5" y1="253.374" x2="404.2" y2="253.374" stroke="#164c16" stroke-width="0.95" />
<circle cx="377.5" cy="253.374" r="2" fill="#164c16"/>
<line x1="377.5" y1="258.836" x2="404.2" y2="258.836" stroke="#164c16" stroke-width="0.95" />
<circle cx="377.5" cy="258.836" r="2" fill="#164c16"/>
<line x1="377.5" y1="264.298" x2="404.2" y2="264.298" stroke="#164c16" stroke-width="0.95" />
<circle cx="377.5" cy="264.298" r="2" fill="#164c16"/>
<line x1="377.5" y1="269.76" x2="404.2" y2="269.76" stroke="#164c16" stroke-width="0.95" />
<circle cx="377.5" cy="269.76" r="2" fill="#164c16"/>
<line x1="377.5" y1="275.222" x2="404.2" y2="275.222" stroke="#164c16" stroke-width="0.95" />
<circle cx="377.5" cy="275.222" r="2" fill="#164c16"/>
<line x1="377.5" y1="280.68399999999997" x2="404.2" y2="280.68399999999997" stroke="#164c16" stroke-width="0.95" />
<circle cx="377.5" cy="280.68399999999997" r="2" fill="#164c16"/>
<line x1="377.5" y1="286.14599999999996" x2="404.2" y2="286.14599999999996" stroke="#164c16" stroke-width="0.95" />
<circle cx="377.5" cy="286.14599999999996" r="2" fill="#164c16"/>
<line x1="377.5" y1="291.608" x2="404.2" y2="291.608" stroke="#164c16" stroke-width="0.95" />
<line x1="377.5" y1="88" x2="377.5" y2="291.608" stroke="#164c16" stroke-width="0.95" />
<path d="M377.75,83.6 L380.8,89.8 L374.7,89.8 Z" fill="none" stroke="#164c16" stroke-width="0.95"/>
<line x1="393.5" y1="122.286" x2="393.5" y2="318.5" stroke="#164c16" stroke-width="0.95" />
<line x1="393.5" y1="122.286" x2="404.2" y2="122.286" stroke="#164c16" stroke-width="0.95" />
<line x1="393.5" y1="297.07" x2="404.2" y2="297.07" stroke="#164c16" stroke-width="0.95" />
<circle cx="393.5" cy="297.07" r="2" fill="#164c16"/>
<line x1="387.5" y1="318.5" x2="399.5" y2="318.5" stroke="#164c16" stroke-width="0.95" />
<line x1="389.5" y1="321.6" x2="397.5" y2="321.6" stroke="#164c16" stroke-width="0.95" />
<line x1="391.5" y1="324.7" x2="395.5" y2="324.7" stroke="#164c16" stroke-width="0.95" />
<circle cx="315.6" cy="138.672" r="2.1" fill="none" stroke="#164c16" stroke-width="0.95"/>
<line x1="317.7" y1="138.672" x2="404.2" y2="138.672" stroke="#164c16" stroke-width="0.95" />
<text x="311.3" y="140.272" font-size="4.6" fill="#4a4a4a" text-anchor="end"  stroke="#4a4a4a" stroke-width="0.14">CS</text>
<circle cx="315.6" cy="144.13400000000001" r="2.1" fill="none" stroke="#164c16" stroke-width="0.95"/>
<line x1="317.7" y1="144.13400000000001" x2="404.2" y2="144.13400000000001" stroke="#164c16" stroke-width="0.95" />
<text x="311.3" y="145.734" font-size="4.6" fill="#4a4a4a" text-anchor="end"  stroke="#4a4a4a" stroke-width="0.14">SCK</text>
<circle cx="315.6" cy="149.596" r="2.1" fill="none" stroke="#164c16" stroke-width="0.95"/>
<line x1="317.7" y1="149.596" x2="404.2" y2="149.596" stroke="#164c16" stroke-width="0.95" />
<text x="311.3" y="151.196" font-size="4.6" fill="#4a4a4a" text-anchor="end"  stroke="#4a4a4a" stroke-width="0.14">DC</text>
<circle cx="315.6" cy="160.52" r="2.1" fill="none" stroke="#164c16" stroke-width="0.95"/>
<line x1="317.7" y1="160.52" x2="404.2" y2="160.52" stroke="#164c16" stroke-width="0.95" />
<text x="311.3" y="162.12" font-size="4.6" fill="#4a4a4a" text-anchor="end"  stroke="#4a4a4a" stroke-width="0.14">MOSI</text>
<circle cx="315.6" cy="165.982" r="2.1" fill="none" stroke="#164c16" stroke-width="0.95"/>
<line x1="317.7" y1="165.982" x2="404.2" y2="165.982" stroke="#164c16" stroke-width="0.95" />
<text x="311.3" y="167.582" font-size="4.6" fill="#4a4a4a" text-anchor="end"  stroke="#4a4a4a" stroke-width="0.14">MISO</text>
<circle cx="321.2" cy="302.53200000000004" r="2.1" fill="none" stroke="#164c16" stroke-width="0.95"/>
<line x1="323.3" y1="302.53200000000004" x2="404.2" y2="302.53200000000004" stroke="#164c16" stroke-width="0.95" />
<text x="317" y="304.13200000000006" font-size="4.6" fill="#4a4a4a" text-anchor="end"  stroke="#4a4a4a" stroke-width="0.14">GP5</text>
<path d="M364,264.35 H369.6 M366.8,261.8 V266.9" stroke="#7474d8" stroke-width="1.5"/>
<rect x="404.5" y="89.5" width="181.0" height="229.8" fill="none" stroke="#9a9ad8" stroke-width="1" stroke-dasharray="5.1 2.1"/>
<text x="414.9" y="98.9" font-size="6.7" fill="#333" text-anchor="start" textLength="16.2" lengthAdjust="spacingAndGlyphs"  stroke="#333" stroke-width="0.3">LCD1</text>
<rect x="414.9" y="100.4" width="165.1" height="207.9" fill="#cbcbb1" stroke="#952222" stroke-width="1.1"/>
<rect x="438.5" y="114.4" width="133.5" height="179.6" fill="#e8e8e8" stroke="#952222" stroke-width="1"/>
<rect x="440.4" y="116.2" width="130.1" height="175.6" fill="#000" />
<line x1="404.2" y1="105.9" x2="414.9" y2="105.9" stroke="#952222" stroke-width="0.95" />
<rect x="408.09999999999997" y="101.80000000000001" width="2.6" height="2.6" fill="#ff2a2a" />
<text x="418" y="107.5" font-size="4.6" fill="#4a4a4a" text-anchor="start"  stroke="#4a4a4a" stroke-width="0.14">IM3</text>
<line x1="404.2" y1="111.36200000000001" x2="414.9" y2="111.36200000000001" stroke="#952222" stroke-width="0.95" />
<rect x="408.09999999999997" y="107.26200000000001" width="2.6" height="2.6" fill="#ff2a2a" />
<text x="418" y="112.962" font-size="4.6" fill="#4a4a4a" text-anchor="start"  stroke="#4a4a4a" stroke-width="0.14">IM2</text>
<line x1="404.2" y1="116.82400000000001" x2="414.9" y2="116.82400000000001" stroke="#952222" stroke-width="0.95" />
<rect x="408.09999999999997" y="112.72400000000002" width="2.6" height="2.6" fill="#ff2a2a" />
<text x="418" y="118.424" font-size="4.6" fill="#4a4a4a" text-anchor="start"  stroke="#4a4a4a" stroke-width="0.14">IM1</text>
<line x1="404.2" y1="122.286" x2="414.9" y2="122.286" stroke="#952222" stroke-width="0.95" />
<rect x="408.09999999999997" y="118.186" width="2.6" height="2.6" fill="#2a2aff" />
<text x="418" y="123.886" font-size="4.6" fill="#4a4a4a" text-anchor="start"  stroke="#4a4a4a" stroke-width="0.14">IM0</text>
<line x1="404.2" y1="127.748" x2="414.9" y2="127.748" stroke="#952222" stroke-width="0.95" />
<rect x="408.09999999999997" y="123.64800000000001" width="2.6" height="2.6" fill="#ff2a2a" />
<text x="418" y="129.348" font-size="4.6" fill="#4a4a4a" text-anchor="start"  stroke="#4a4a4a" stroke-width="0.14">EXTC</text>
<line x1="404.2" y1="133.21" x2="414.9" y2="133.21" stroke="#952222" stroke-width="0.95" />
<rect x="408.09999999999997" y="129.10999999999999" width="2.6" height="2.6" fill="#ff2a2a" />
<text x="418" y="134.81" font-size="4.6" fill="#4a4a4a" text-anchor="start"  stroke="#4a4a4a" stroke-width="0.14">RES</text>
<line x1="418" y1="130.26000000000002" x2="427" y2="130.26000000000002" stroke="#4a4a4a" stroke-width="0.7" />
<line x1="404.2" y1="138.672" x2="414.9" y2="138.672" stroke="#952222" stroke-width="0.95" />
<rect x="408.09999999999997" y="134.57199999999997" width="2.6" height="2.6" fill="#ff2a2a" />
<text x="418" y="140.272" font-size="4.6" fill="#4a4a4a" text-anchor="start"  stroke="#4a4a4a" stroke-width="0.14">CS</text>
<line x1="418" y1="135.722" x2="423.5" y2="135.722" stroke="#4a4a4a" stroke-width="0.7" />
<line x1="404.2" y1="144.13400000000001" x2="414.9" y2="144.13400000000001" stroke="#952222" stroke-width="0.95" />
<rect x="408.09999999999997" y="140.034" width="2.6" height="2.6" fill="#2a2aff" />
<text x="418" y="145.734" font-size="4.6" fill="#4a4a4a" text-anchor="start"  stroke="#4a4a4a" stroke-width="0.14">D/C/SCL</text>
<line x1="421.5" y1="141.18400000000003" x2="424" y2="141.18400000000003" stroke="#4a4a4a" stroke-width="0.7" />
<line x1="404.2" y1="149.596" x2="414.9" y2="149.596" stroke="#952222" stroke-width="0.95" />
<rect x="408.09999999999997" y="145.49599999999998" width="2.6" height="2.6" fill="#ff2a2a" />
<text x="418" y="151.196" font-size="4.6" fill="#4a4a4a" text-anchor="start"  stroke="#4a4a4a" stroke-width="0.14">WR/D/C</text>
<line x1="418" y1="146.64600000000002" x2="424.3" y2="146.64600000000002" stroke="#4a4a4a" stroke-width="0.7" />
<line x1="404.2" y1="155.058" x2="414.9" y2="155.058" stroke="#952222" stroke-width="0.95" />
<rect x="408.09999999999997" y="150.95799999999997" width="2.6" height="2.6" fill="#ff2a2a" />
<text x="418" y="156.658" font-size="4.6" fill="#4a4a4a" text-anchor="start"  stroke="#4a4a4a" stroke-width="0.14">RD</text>
<line x1="418" y1="152.108" x2="424" y2="152.108" stroke="#4a4a4a" stroke-width="0.7" />
<line x1="404.2" y1="160.52" x2="414.9" y2="160.52" stroke="#952222" stroke-width="0.95" />
<rect x="408.09999999999997" y="156.42" width="2.6" height="2.6" fill="#ff2a2a" />
<text x="418" y="162.12" font-size="4.6" fill="#4a4a4a" text-anchor="start"  stroke="#4a4a4a" stroke-width="0.14">SDI/SDA</text>
<line x1="404.2" y1="165.982" x2="414.9" y2="165.982" stroke="#952222" stroke-width="0.95" />
<rect x="408.09999999999997" y="161.88199999999998" width="2.6" height="2.6" fill="#2a2aff" />
<text x="418" y="167.582" font-size="4.6" fill="#4a4a4a" text-anchor="start"  stroke="#4a4a4a" stroke-width="0.14">SDO</text>
<line x1="404.2" y1="171.44400000000002" x2="414.9" y2="171.44400000000002" stroke="#952222" stroke-width="0.95" />
<rect x="408.09999999999997" y="167.344" width="2.6" height="2.6" fill="#ff2a2a" />
<text x="418" y="173.044" font-size="4.6" fill="#4a4a4a" text-anchor="start"  stroke="#4a4a4a" stroke-width="0.14">TE</text>
<line x1="404.2" y1="176.906" x2="414.9" y2="176.906" stroke="#952222" stroke-width="0.95" />
<rect x="408.09999999999997" y="172.80599999999998" width="2.6" height="2.6" fill="#ff2a2a" />
<text x="418" y="178.506" font-size="4.6" fill="#4a4a4a" text-anchor="start"  stroke="#4a4a4a" stroke-width="0.14">DOTCLK</text>
<line x1="404.2" y1="182.368" x2="414.9" y2="182.368" stroke="#952222" stroke-width="0.95" />
<rect x="408.09999999999997" y="178.26799999999997" width="2.6" height="2.6" fill="#ff2a2a" />
<text x="418" y="183.968" font-size="4.6" fill="#4a4a4a" text-anchor="start"  stroke="#4a4a4a" stroke-width="0.14">VSYNC</text>
<line x1="404.2" y1="187.82999999999998" x2="414.9" y2="187.82999999999998" stroke="#952222" stroke-width="0.95" />
<rect x="408.09999999999997" y="183.72999999999996" width="2.6" height="2.6" fill="#ff2a2a" />
<text x="418" y="189.42999999999998" font-size="4.6" fill="#4a4a4a" text-anchor="start"  stroke="#4a4a4a" stroke-width="0.14">HSYNC</text>
<line x1="404.2" y1="193.292" x2="414.9" y2="193.292" stroke="#952222" stroke-width="0.95" />
<rect x="408.09999999999997" y="189.19199999999998" width="2.6" height="2.6" fill="#ff2a2a" />
<text x="418" y="194.892" font-size="4.6" fill="#4a4a4a" text-anchor="start"  stroke="#4a4a4a" stroke-width="0.14">DE</text>
<line x1="404.2" y1="198.75400000000002" x2="414.9" y2="198.75400000000002" stroke="#952222" stroke-width="0.95" />
<rect x="408.09999999999997" y="194.654" width="2.6" height="2.6" fill="#ff2a2a" />
<text x="418" y="200.354" font-size="4.6" fill="#4a4a4a" text-anchor="start"  stroke="#4a4a4a" stroke-width="0.14">D17</text>
<line x1="404.2" y1="204.216" x2="414.9" y2="204.216" stroke="#952222" stroke-width="0.95" />
<rect x="408.09999999999997" y="200.11599999999999" width="2.6" height="2.6" fill="#ff2a2a" />
<text x="418" y="205.816" font-size="4.6" fill="#4a4a4a" text-anchor="start"  stroke="#4a4a4a" stroke-width="0.14">D16</text>
<line x1="404.2" y1="209.678" x2="414.9" y2="209.678" stroke="#952222" stroke-width="0.95" />
<rect x="408.09999999999997" y="205.57799999999997" width="2.6" height="2.6" fill="#ff2a2a" />
<text x="418" y="211.278" font-size="4.6" fill="#4a4a4a" text-anchor="start"  stroke="#4a4a4a" stroke-width="0.14">D15</text>
<line x1="404.2" y1="215.14" x2="414.9" y2="215.14" stroke="#952222" stroke-width="0.95" />
<rect x="408.09999999999997" y="211.03999999999996" width="2.6" height="2.6" fill="#ff2a2a" />
<text x="418" y="216.73999999999998" font-size="4.6" fill="#4a4a4a" text-anchor="start"  stroke="#4a4a4a" stroke-width="0.14">D14</text>
<line x1="404.2" y1="220.602" x2="414.9" y2="220.602" stroke="#952222" stroke-width="0.95" />
<rect x="408.09999999999997" y="216.50199999999998" width="2.6" height="2.6" fill="#ff2a2a" />
<text x="418" y="222.202" font-size="4.6" fill="#4a4a4a" text-anchor="start"  stroke="#4a4a4a" stroke-width="0.14">D13</text>
<line x1="404.2" y1="226.064" x2="414.9" y2="226.064" stroke="#952222" stroke-width="0.95" />
<rect x="408.09999999999997" y="221.96399999999997" width="2.6" height="2.6" fill="#ff2a2a" />
<text x="418" y="227.664" font-size="4.6" fill="#4a4a4a" text-anchor="start"  stroke="#4a4a4a" stroke-width="0.14">D12</text>
<line x1="404.2" y1="231.526" x2="414.9" y2="231.526" stroke="#952222" stroke-width="0.95" />
<rect x="408.09999999999997" y="227.426" width="2.6" height="2.6" fill="#ff2a2a" />
<text x="418" y="233.126" font-size="4.6" fill="#4a4a4a" text-anchor="start"  stroke="#4a4a4a" stroke-width="0.14">D11</text>
<line x1="404.2" y1="236.988" x2="414.9" y2="236.988" stroke="#952222" stroke-width="0.95" />
<rect x="408.09999999999997" y="232.88799999999998" width="2.6" height="2.6" fill="#ff2a2a" />
<text x="418" y="238.588" font-size="4.6" fill="#4a4a4a" text-anchor="start"  stroke="#4a4a4a" stroke-width="0.14">D10</text>
<line x1="404.2" y1="242.45" x2="414.9" y2="242.45" stroke="#952222" stroke-width="0.95" />
<rect x="408.09999999999997" y="238.34999999999997" width="2.6" height="2.6" fill="#ff2a2a" />
<text x="418" y="244.04999999999998" font-size="4.6" fill="#4a4a4a" text-anchor="start"  stroke="#4a4a4a" stroke-width="0.14">D9</text>
<line x1="404.2" y1="247.912" x2="414.9" y2="247.912" stroke="#952222" stroke-width="0.95" />
<rect x="408.09999999999997" y="243.81199999999998" width="2.6" height="2.6" fill="#ff2a2a" />
<text x="418" y="249.512" font-size="4.6" fill="#4a4a4a" text-anchor="start"  stroke="#4a4a4a" stroke-width="0.14">D8</text>
<line x1="404.2" y1="253.374" x2="414.9" y2="253.374" stroke="#952222" stroke-width="0.95" />
<rect x="408.09999999999997" y="249.27399999999997" width="2.6" height="2.6" fill="#ff2a2a" />
<text x="418" y="254.974" font-size="4.6" fill="#4a4a4a" text-anchor="start"  stroke="#4a4a4a" stroke-width="0.14">D7</text>
<line x1="404.2" y1="258.836" x2="414.9" y2="258.836" stroke="#952222" stroke-width="0.95" />
<rect x="408.09999999999997" y="254.736" width="2.6" height="2.6" fill="#ff2a2a" />
<text x="418" y="260.43600000000004" font-size="4.6" fill="#4a4a4a" text-anchor="start"  stroke="#4a4a4a" stroke-width="0.14">D6</text>
<line x1="404.2" y1="264.298" x2="414.9" y2="264.298" stroke="#952222" stroke-width="0.95" />
<rect x="408.09999999999997" y="260.198" width="2.6" height="2.6" fill="#ff2a2a" />
<text x="418" y="265.898" font-size="4.6" fill="#4a4a4a" text-anchor="start"  stroke="#4a4a4a" stroke-width="0.14">D5</text>
<line x1="404.2" y1="269.76" x2="414.9" y2="269.76" stroke="#952222" stroke-width="0.95" />
<rect x="408.09999999999997" y="265.65999999999997" width="2.6" height="2.6" fill="#ff2a2a" />
<text x="418" y="271.36" font-size="4.6" fill="#4a4a4a" text-anchor="start"  stroke="#4a4a4a" stroke-width="0.14">D4</text>
<line x1="404.2" y1="275.222" x2="414.9" y2="275.222" stroke="#952222" stroke-width="0.95" />
<rect x="408.09999999999997" y="271.12199999999996" width="2.6" height="2.6" fill="#ff2a2a" />
<text x="418" y="276.822" font-size="4.6" fill="#4a4a4a" text-anchor="start"  stroke="#4a4a4a" stroke-width="0.14">D3</text>
<line x1="404.2" y1="280.68399999999997" x2="414.9" y2="280.68399999999997" stroke="#952222" stroke-width="0.95" />
<rect x="408.09999999999997" y="276.58399999999995" width="2.6" height="2.6" fill="#ff2a2a" />
<text x="418" y="282.284" font-size="4.6" fill="#4a4a4a" text-anchor="start"  stroke="#4a4a4a" stroke-width="0.14">D2</text>
<line x1="404.2" y1="286.14599999999996" x2="414.9" y2="286.14599999999996" stroke="#952222" stroke-width="0.95" />
<rect x="408.09999999999997" y="282.04599999999994" width="2.6" height="2.6" fill="#ff2a2a" />
<text x="418" y="287.746" font-size="4.6" fill="#4a4a4a" text-anchor="start"  stroke="#4a4a4a" stroke-width="0.14">D1</text>
<line x1="404.2" y1="291.608" x2="414.9" y2="291.608" stroke="#952222" stroke-width="0.95" />
<rect x="408.09999999999997" y="287.508" width="2.6" height="2.6" fill="#ff2a2a" />
<text x="418" y="293.208" font-size="4.6" fill="#4a4a4a" text-anchor="start"  stroke="#4a4a4a" stroke-width="0.14">D0</text>
<line x1="404.2" y1="297.07" x2="414.9" y2="297.07" stroke="#952222" stroke-width="0.95" />
<rect x="408.09999999999997" y="292.96999999999997" width="2.6" height="2.6" fill="#2a2aff" />
<text x="418" y="298.67" font-size="4.6" fill="#4a4a4a" text-anchor="start"  stroke="#4a4a4a" stroke-width="0.14">LEDK</text>
<line x1="404.2" y1="302.53200000000004" x2="414.9" y2="302.53200000000004" stroke="#952222" stroke-width="0.95" />
<rect x="408.09999999999997" y="298.432" width="2.6" height="2.6" fill="#ff2a2a" />
<text x="418" y="304.13200000000006" font-size="4.6" fill="#4a4a4a" text-anchor="start"  stroke="#4a4a4a" stroke-width="0.14">LEDA</text>
<text x="414.9" y="312.8" font-size="4.6" fill="#4a4a4a" text-anchor="start"  stroke="#4a4a4a" stroke-width="0.14">ILI9341</text>
<text x="404.7" y="323.6" font-size="4.6" fill="#3a3ac8" text-anchor="start" textLength="42" lengthAdjust="spacingAndGlyphs"  stroke="#3a3ac8" stroke-width="0.15">Schematic Animation</text>
<defs><radialGradient id="globe" cx="0.5" cy="0.68" r="0.62"><stop offset="0" stop-color="#38b8f0"/><stop offset="0.4" stop-color="#1460c0"/><stop offset="1" stop-color="#06206a"/></radialGradient><radialGradient id="el" cx="0.5" cy="0.62" r="0.55"><stop offset="0" stop-color="#f04010"/><stop offset="0.6" stop-color="#c02010"/><stop offset="1" stop-color="#3a1a00"/></radialGradient></defs>
<ellipse cx="505" cy="203.5" rx="34.6" ry="8.8" fill="none" stroke="#c4c4c8" stroke-width="0.9"/>
<ellipse cx="503.5" cy="203.75" rx="29.3" ry="6" transform="rotate(46.2 503.5 203.75)" fill="none" stroke="#c4c4c8" stroke-width="0.9"/>
<ellipse cx="506.3" cy="203.75" rx="29.3" ry="6" transform="rotate(-46.2 506.3 203.75)" fill="none" stroke="#c4c4c8" stroke-width="0.9"/>
<ellipse cx="505.2" cy="203.5" rx="15.8" ry="16.2" fill="url(#globe)" stroke="#20c0d0" stroke-width="1.7"/>
<circle cx="511" cy="197" r="1.6" fill="#50c0ff" opacity="0.7"/>
<path d="M470.4,203.5 A34.6,8.8 0 0 0 539.6,203.5" fill="none" stroke="#c4c4c8" stroke-width="0.9"/>
<path d="M483.4,182.8 A29.3,6 46.2 0 0 523.6,224.7" fill="none" stroke="#c4c4c8" stroke-width="0.9"/>
<path d="M526.4,182.8 A29.3,6 -46.2 0 1 486.2,224.7" fill="none" stroke="#c4c4c8" stroke-width="0.9"/>
<circle cx="483.4" cy="182.8" r="3.8" fill="url(#el)" stroke="#f2c000" stroke-width="1.4"/>
<ellipse cx="483.09999999999997" cy="181.60000000000002" rx="1.6" ry="1" fill="#ffffff" opacity="0.85"/>
<circle cx="526.4" cy="182.8" r="3.8" fill="url(#el)" stroke="#f2c000" stroke-width="1.4"/>
<ellipse cx="526.1" cy="181.60000000000002" rx="1.6" ry="1" fill="#ffffff" opacity="0.85"/>
<circle cx="486.2" cy="224.7" r="3.8" fill="url(#el)" stroke="#f2c000" stroke-width="1.4"/>
<ellipse cx="485.9" cy="223.5" rx="1.6" ry="1" fill="#ffffff" opacity="0.85"/>
<circle cx="523.6" cy="224.7" r="3.8" fill="url(#el)" stroke="#f2c000" stroke-width="1.4"/>
<ellipse cx="523.3000000000001" cy="223.5" rx="1.6" ry="1" fill="#ffffff" opacity="0.85"/>
<rect x="100.5" y="427.2" width="532.5" height="27.7" fill="#ffffff" stroke="#1a1a1a" stroke-width="1"/>
<line x1="285.1" y1="427.2" x2="285.1" y2="454.9" stroke="#1a1a1a" stroke-width="1" />
<line x1="490.3" y1="427.2" x2="490.3" y2="454.9" stroke="#1a1a1a" stroke-width="1" />
<path d="M104.8,430.3 V445.1 H173.3 L181.2,431.2 L188.8,445.1 L195.6,431.2 L203.8,445.1 L211,431.2 L218.2,445.1 H283.2" fill="none" stroke="#111" stroke-width="2.3" stroke-linejoin="miter" stroke-miterlimit="3"/>
<text x="109.2" y="441.6" font-size="11.2" font-weight="bold" fill="#111" stroke="#111" stroke-width="0.45" textLength="63.2" lengthAdjust="spacingAndGlyphs">abcenter</text>
<text x="220" y="440.9" font-size="5.6" font-weight="bold" fill="#111" stroke="#111" stroke-width="0.3" textLength="62.8" lengthAdjust="spacingAndGlyphs">www.labcenter.com</text>
<text x="104.2" y="451.7" font-size="4.2" font-weight="bold" fill="#111" stroke="#111" stroke-width="0.6" textLength="66.5" lengthAdjust="spacing">Electronics</text>
<text x="329.4" y="440.1" font-size="8.8" font-weight="bold" fill="#1c1c8c" stroke="#1c1c8c" stroke-width="0.2" textLength="121.2" lengthAdjust="spacingAndGlyphs">MicroPython PNG Rendering</text>
<rect x="491" y="428.4" width="1" height="25.5" fill="#888" />
<rect x="492" y="428.75" width="31.9" height="24.85" fill="#000" />
<path d="M499.5,453.6 V434 M507.8,428.75 V448 M516,453.6 V434" stroke="#fff" stroke-width="1" fill="none"/>
<rect x="519.5" y="449" width="1.6" height="1.8" fill="#fff" />
<text x="526.8" y="444.1" font-size="9.4" font-weight="bold" fill="#111" stroke="#111" stroke-width="0.45" textLength="73" lengthAdjust="spacingAndGlyphs">MicroPython</text>
<defs><linearGradient id="coil" x1="0" y1="0" x2="0" y2="1"><stop offset="0" stop-color="#e02010"/><stop offset="0.5" stop-color="#ff3a10"/><stop offset="0.75" stop-color="#c8b000"/><stop offset="1" stop-color="#e02010"/></linearGradient><linearGradient id="head" x1="0" y1="0" x2="0" y2="1"><stop offset="0" stop-color="#e02010"/><stop offset="0.6" stop-color="#f06010"/><stop offset="1" stop-color="#f0c000"/></linearGradient></defs>
<path d="M605.2,449.3 Q611,445.6 618,445.2 Q625,445.4 630.7,448.6 Q624,452.3 618,452.5 Q611,452.2 605.2,449.3 Z" fill="#161616" stroke="#3a3a3a" stroke-width="0.6"/>
<path d="M607.5,449.5 Q618,447 629,448.8" stroke="#555" stroke-width="0.4" fill="none"/>
<ellipse cx="613.3" cy="446.2" rx="4" ry="2.6" fill="url(#coil)"/>
<ellipse cx="623.2" cy="446.2" rx="4" ry="2.6" fill="url(#coil)"/>
<ellipse cx="612.8" cy="443.2" rx="3.3" ry="2.5" fill="url(#coil)"/>
<ellipse cx="623.6" cy="443.3" rx="3.3" ry="2.5" fill="url(#coil)"/>
<path d="M610,444.6 Q613,443.8 616,445 M620.5,445 Q623.5,443.8 626.6,444.6 M609.8,447.6 Q613,447 616.5,448 M620,448 Q623.5,447 627,447.6" stroke="#d8b400" stroke-width="0.6" fill="none"/>
<path d="M614.3,449 Q616,442 617.2,438 L619.6,438 Q620.5,443 621.8,449 Z" fill="#e6c400" stroke="#b09000" stroke-width="0.3"/>
<ellipse cx="618.2" cy="434.9" rx="3.1" ry="3.4" fill="url(#head)"/>
<path d="M616.2,432 L616.5,428.6 L617.8,430.3 L619,428.6 L620,432 Z" fill="#f0f0f0" stroke="#aaa" stroke-width="0.35"/>
<defs><linearGradient id="sb" x1="0" y1="0" x2="0" y2="1"><stop offset="0" stop-color="#e8f2fa"/><stop offset="1" stop-color="#bed9ee"/></linearGradient></defs>
<rect x="1" y="477.5" width="637.5" height="12.8" fill="url(#sb)" />
<line x1="95.7" y1="477.5" x2="638.5" y2="477.5" stroke="#b8b8b0" stroke-width="0.8" />
<path d="M7.1,480 L17,484.6 L7.1,489.3 Z" fill="#12b812"/>
<rect x="23" y="480" width="1.7" height="9.2" fill="#1838d8" />
<path d="M25.7,480 L32.8,484.6 L25.7,489.2 Z" fill="#1838d8"/>
<rect x="40.5" y="480" width="2.1" height="9.2" fill="#1838d8" />
<rect x="44.9" y="480" width="2.1" height="9.2" fill="#1838d8" />
<rect x="54.7" y="480.4" width="9.6" height="8.8" fill="#1838d8" />
<line x1="69.5" y1="479" x2="69.5" y2="489" stroke="#c4d0dc" stroke-width="0.8" />
<path d="M77,480.3 L81.3,488.6 L72.7,488.6 Z" fill="#f0a800" stroke="#d08000" stroke-width="0.5"/>
<rect x="76.6" y="482.5" width="0.9" height="3.4" fill="#222" />
<rect x="76.6" y="486.6" width="0.9" height="0.9" fill="#222" />
<text x="84" y="486.4" font-size="4.8" fill="#333" text-anchor="start" textLength="29.3" lengthAdjust="spacingAndGlyphs"  stroke="#333" stroke-width="0.12">4 Message(s)</text>
<line x1="116" y1="479" x2="116" y2="489" stroke="#c4d0dc" stroke-width="0.8" />
<text x="120.8" y="486.4" font-size="4.85" fill="#2a6a2a" text-anchor="start" textLength="101.7" lengthAdjust="spacingAndGlyphs"  stroke="#2a6a2a" stroke-width="0.12">ANIMATING: 00:00:06.997183 (CPU load 77%)</text>
<line x1="524.5" y1="478" x2="524.5" y2="490.5" stroke="#ffffff" stroke-width="1" />
<line x1="523.3" y1="478" x2="523.3" y2="490.5" stroke="#c8dcec" stroke-width="0.6" />
<path d="M6.5,24.8 H11.5 L13.8,27.1 V34.8 H6.5 Z" fill="#fff" stroke="#777" stroke-width="0.6"/>
<path d="M18.2,28 H22 L23,29 H27.8 L26.8,34.8 H18.2 Z" fill="#f2c230" stroke="#b08010" stroke-width="0.5"/>
<path d="M22,28.5 Q23,25.5 26,25.3" stroke="#222" stroke-width="0.9" fill="none"/>
<rect x="30.2" y="24.8" width="9.8" height="10" fill="#2a7ad8" />
<rect x="32" y="25.6" width="6" height="3.2" fill="#d8d8d8" />
<rect x="32.5" y="31.2" width="5" height="3.4" fill="#f4f4f4" />
<rect x="43.3" y="24.8" width="5.5" height="10" fill="#b07a20" />
<rect x="44.3" y="25.8" width="3.5" height="8" fill="#e8b040" />
<path d="M46.5,29.8 L50,27.2 V28.8 H52.5 V30.8 H50 V32.4 Z" fill="#18b818"/>
<line x1="55.5" y1="24.5" x2="55.5" y2="35" stroke="#c0d0e0" stroke-width="0.6" />
<path d="M58,30 L62,25.3 L66.2,30 Z" fill="#d02020"/>
<rect x="59" y="30" width="6.2" height="4.8" fill="#f8f0c0" stroke="#806020" stroke-width="0.4"/>
<rect x="61.2" y="31.5" width="2" height="3.3" fill="#d8a020" />
<line x1="75.5" y1="24.8" x2="75.5" y2="34.8" stroke="#223" stroke-width="0.7" />
<rect x="72.5" y="27.5" width="6" height="1.6" fill="#1848a8" />
<rect x="72.5" y="30.5" width="6" height="1.6" fill="#1848a8" />
<line x1="72" y1="26" x2="79" y2="26" stroke="#223" stroke-width="0.5" />
<line x1="72" y1="33.5" x2="79" y2="33.5" stroke="#223" stroke-width="0.5" />
<rect x="83.5" y="25.5" width="8.6" height="8.6" rx="1.5" fill="#f0d0d0" stroke="#d02020" stroke-width="1.4"/>
<rect x="86.2" y="28.2" width="3.2" height="3.2" fill="#e00000" />
<path d="M95,29.8 L99,26.5 V33 Z" fill="none" stroke="#1860c0" stroke-width="0.6"/><path d="M99.5,30 L104.5,25.5 V34.5 Z" fill="#18a030"/>
<rect x="101.5" y="30.5" width="2" height="2" fill="#e00000" />
<circle cx="112" cy="29" r="3.8" fill="#a8e8e0" stroke="#1a8a7a" stroke-width="1"/><path d="M114.5,31.8 L117,34.5" stroke="#a05010" stroke-width="1.3"/>
<rect x="121.4" y="24.8" width="6.3" height="10" fill="#18907a" />
<rect x="123" y="26.6" width="3" height="6.4" fill="#40c0a0" />
<path d="M133.5,24.8 H138.5 L140.8,27.1 V34.8 H133.5 Z" fill="#fffbe8" stroke="#777" stroke-width="0.6"/>
<text x="134.8" y="33" font-size="7" font-weight="bold" fill="#a09010">$</text>
<rect x="144.8" y="26.5" width="9.9" height="6.5" fill="#e8f4ff" stroke="#5080b0" stroke-width="0.6"/>
<rect x="146" y="28.5" width="7.5" height="2.5" fill="#3070d0" />
<path d="M159.0,24.8 H164.0 L166.3,27.1 V34.8 H159.0 Z" fill="#f4f4f4" stroke="#aaa" stroke-width="0.6"/>
<line x1="170" y1="24.5" x2="170" y2="35" stroke="#c0d0e0" stroke-width="0.6" />
<circle cx="177" cy="29.8" r="5" fill="#1050d8"/><text x="175.1" y="32.6" font-size="7.6" font-weight="bold" fill="#fff">?</text>
<line x1="188.8" y1="24.5" x2="188.8" y2="35" stroke="#c0d0e0" stroke-width="0.6" />
<path d="M191.5,24.8 H196.5 L198.8,27.1 V34.8 H191.5 Z" fill="#fff" stroke="#777" stroke-width="0.6"/>
<path d="M193.5,28.5 Q195,26.8 197,28.3 M196.5,31.5 Q195,33.2 193,31.7" stroke="#18a030" stroke-width="1" fill="none"/>
<rect x="203.3" y="25.5" width="1.3" height="1.3" fill="#556" />
<rect x="203.3" y="29.1" width="1.3" height="1.3" fill="#556" />
<rect x="203.3" y="32.7" width="1.3" height="1.3" fill="#556" />
<rect x="206.9" y="25.5" width="1.3" height="1.3" fill="#556" />
<rect x="206.9" y="29.1" width="1.3" height="1.3" fill="#556" />
<rect x="206.9" y="32.7" width="1.3" height="1.3" fill="#556" />
<rect x="210.5" y="25.5" width="1.3" height="1.3" fill="#556" />
<rect x="210.5" y="29.1" width="1.3" height="1.3" fill="#556" />
<rect x="210.5" y="32.7" width="1.3" height="1.3" fill="#556" />
<line x1="217" y1="29.8" x2="228" y2="29.8" stroke="#889" stroke-width="0.7" />
<line x1="222.5" y1="24.5" x2="222.5" y2="35" stroke="#889" stroke-width="0.7" />
<rect x="220" y="27.3" width="5" height="5" fill="#c8b820" />
<line x1="232.8" y1="24.5" x2="232.8" y2="35" stroke="#c0d0e0" stroke-width="0.6" />
<path d="M237.5,24.6 L240,27.5 H238.5 V29 H240 V27.8 L242.8,29.8 L240,32.2 V30.6 H238.5 V32 H240 L237.5,35 L235,32 H236.5 V30.6 H235 V32.2 L232.3,29.8 L235,27.8 V29 H236.5 V27.5 H235 Z" fill="#1050c8"/>
<circle cx="249.2" cy="29" r="3.7" fill="#a8e8e8" stroke="#1a6a6a" stroke-width="0.9"/><path d="M251.8,31.6 L254,34.3" stroke="#a05010" stroke-width="1.3"/>
<path d="M247.3,29 H251.1 M249.2,27.1 V30.9" stroke="#111" stroke-width="1.1"/>
<circle cx="261.7" cy="29" r="3.7" fill="#a8e8e8" stroke="#1a6a6a" stroke-width="0.9"/><path d="M264.3,31.6 L266.5,34.3" stroke="#a05010" stroke-width="1.3"/>
<path d="M259.8,29 H263.6" stroke="#111" stroke-width="1.1"/>
<circle cx="274.2" cy="29" r="3.7" fill="#a8e8e8" stroke="#1a6a6a" stroke-width="0.9"/><path d="M276.8,31.6 L279,34.3" stroke="#a05010" stroke-width="1.3"/>
<rect x="272.6" y="27.4" width="3.2" height="3.2" fill="#556" />
<path d="M284.5,24.8 H289.5 L291.8,27.1 V34.8 H284.5 Z" fill="#fff" stroke="#999" stroke-width="0.6"/>
<circle cx="289" cy="28" r="2.5" fill="#a8e8e8" stroke="#1a6a6a" stroke-width="0.7"/>
<line x1="296.5" y1="24.5" x2="296.5" y2="35" stroke="#c0d0e0" stroke-width="0.6" />
<path d="M301.5,33.5 V29.5 Q301.5,27 305,27 H308 V25 L310.5,28 L308,31 V29 H305 Q303.5,29 303.5,30.5 V33.5 Z" fill="#a8acb4" transform="translate(610,0) scale(-1,1) translate(-0,0)"/>
<path d="M313.5,33.5 V29.5 Q313.5,27 317,27 H319 V25 L321.5,28 L319,31 V29 H317 Q315.5,29 315.5,30.5 V33.5 Z" fill="#a8acb4"/>
<line x1="326" y1="24.5" x2="326" y2="35" stroke="#c0d0e0" stroke-width="0.6" />
<path d="M330,25 L335,32 M335,25 L330,32" stroke="#999" stroke-width="0.8"/><circle cx="330" cy="33.2" r="1.4" fill="none" stroke="#999" stroke-width="0.7"/><circle cx="335" cy="33.2" r="1.4" fill="none" stroke="#999" stroke-width="0.7"/>
<rect x="340.5" y="25" width="5.5" height="7" fill="#ccc" stroke="#888" stroke-width="0.5"/>
<rect x="343.2" y="27.5" width="5.8" height="7.2" fill="#ddd" stroke="#888" stroke-width="0.5"/>
<rect x="353.5" y="26" width="7.6" height="8.6" fill="#ddd" stroke="#999" stroke-width="0.5"/>
<rect x="355.3" y="25.2" width="4" height="1.8" fill="#bbb" />
<line x1="364.4" y1="24.5" x2="364.4" y2="35" stroke="#c0d0e0" stroke-width="0.6" />
<rect x="367.5" y="25.5" width="11" height="2.6" fill="#8a8a8a" />
<rect x="371.6" y="27.8" width="2.8" height="4" fill="#8a8a8a" />
<rect x="367.5" y="31.5" width="11" height="2.8" fill="#8a8a8a" />
<rect x="379.5" y="25.5" width="11" height="2.6" fill="#8a8a8a" />
<rect x="383.6" y="27.8" width="2.8" height="4" fill="#8a8a8a" />
<rect x="379.5" y="31.5" width="11" height="2.8" fill="#8a8a8a" />
<rect x="392.8" y="25" width="9.4" height="9.6" fill="#8c8c8c" />
<rect x="394.5" y="26.5" width="6" height="6.6" fill="#9a9a9a" />
<rect x="405" y="25" width="9.4" height="9.6" fill="#8c8c8c" />
<path d="M405.5,25.5 L413.9,34.1 M413.9,25.5 L405.5,34.1" stroke="#b0b0b0" stroke-width="0.8"/>
<line x1="417.8" y1="24.5" x2="417.8" y2="35" stroke="#c0d0e0" stroke-width="0.6" />
<circle cx="424" cy="29" r="3.8" fill="#f4f4f4" stroke="#888" stroke-width="0.8"/><path d="M426.5,31.8 L429,34.5" stroke="#888" stroke-width="1.2"/>
<path d="M432.5,33 L436,30 M435,28 L439,25 M436,30 L438,32 L441,29 L439,27 Z" stroke="#999" stroke-width="1" fill="none"/>
<path d="M445.5,34.5 V26 L450,25 L454.5,28 V34.5 Z" fill="#9a9a9a"/><path d="M447,33 L453,27" stroke="#eee" stroke-width="0.8"/>
<path d="M458,34 L464,28 M461.5,25.5 L466.5,27 L465,30 L461,28 Z" stroke="#888" stroke-width="1.4" fill="#888"/>
<line x1="470.7" y1="24.5" x2="470.7" y2="35" stroke="#c0d0e0" stroke-width="0.6" />
<rect x="473.5" y="23.6" width="13.1" height="12.6" fill="#c4daf0" stroke="#9ab8d8" stroke-width="0.5"/>
<rect x="476" y="25.2" width="8" height="2.4" fill="#18a030" />
<rect x="476" y="32" width="8" height="2.4" fill="#18a030" />
<path d="M477,28 Q484,28.5 478,31 Q476,32.5 483,32" stroke="#d02020" stroke-width="1.2" fill="none"/><circle cx="477.5" cy="29.5" r="1.6" fill="none" stroke="#2050d0" stroke-width="0.8"/><circle cx="482.5" cy="30.5" r="1.6" fill="none" stroke="#2050d0" stroke-width="0.8"/>
<path d="M489.5,34.5 L490.5,27 L493,25.5 L494,28.5 H495 L496,25.5 L498.5,27 L499.7,34.5 H495.6 V31.5 H493.6 V34.5 Z" fill="#1848c0"/>
<path d="M503,33.5 L510,25 M504,25.5 L506,27.5 M507,25.5 L508.5,26.5" stroke="#888" stroke-width="1.2" fill="none"/><text x="508.5" y="34.5" font-size="4" fill="#666">A</text>
<line x1="515" y1="24.5" x2="515" y2="35" stroke="#c0d0e0" stroke-width="0.6" />
<path d="M519.0,24.8 H524.0 L526.3,27.1 V34.8 H519.0 Z" fill="#f4f4f4" stroke="#bbb" stroke-width="0.6"/>
<path d="M520.5,31.5 H524.5 M522.5,29.5 V33.5" stroke="#aaa" stroke-width="0.8"/>
<path d="M531,25 L539,34.5 M539,25 L531,34.5" stroke="#999" stroke-width="1"/><rect x="531.5" y="25" width="7" height="9.5" fill="none" stroke="#bbb" stroke-width="0.6"/>
<rect x="543.5" y="25.5" width="6.5" height="3" fill="#ccc" />
<rect x="543.3" y="31" width="3" height="3.5" fill="#ccc" />
<rect x="548" y="31" width="3" height="3.5" fill="#ccc" />
<path d="M545,28.5 V31 M549.5,28.5 V31" stroke="#aaa" stroke-width="0.6"/>
<line x1="554.4" y1="24.5" x2="554.4" y2="35" stroke="#c0d0e0" stroke-width="0.6" />
<path d="M558.5,24.8 H563.5 L565.8,27.1 V34.8 H558.5 Z" fill="#f8f8f8" stroke="#888" stroke-width="0.6"/>
<path d="M560,33 L564.5,26.8" stroke="#1830e0" stroke-width="1.4"/>
<path d="M11.5,39.3 V48.5" stroke="#223" stroke-width="0.6"/>
<rect x="9.5" y="40.5" width="4" height="2.2" fill="#1a5ab0" />
<rect x="9.5" y="44.5" width="4" height="2.5" fill="#1a5ab0" />
<path d="M9,43.5 H14" stroke="#334" stroke-width="0.5"/>
<rect x="83" y="41.5" width="8.2" height="4.6" fill="#e8f4ff" stroke="#6a8ab0" stroke-width="0.6"/>
<rect x="84.3" y="42.8" width="5.6" height="2" fill="#3070d0" />
<rect x="1.5" y="54.2" width="13" height="12.6" fill="#eef4fa" stroke="#c8dced" stroke-width="0.5"/>
<path d="M5,56 V65 L7.2,63 L9,66.5 L10.4,65.8 L8.7,62.4 L11.5,62.2 Z" fill="#111"/>
<path d="M5,69 L11.8,73 L5,77 Z" fill="#f0b020" stroke="#b07810" stroke-width="0.6"/><path d="M2.5,71 H5 M2.5,75 H5" stroke="#889" stroke-width="0.5"/>
<path d="M7.5,79.5 V90 M2.5,84.6 H12.5" stroke="#1a3a9a" stroke-width="0.7"/><circle cx="7.5" cy="84.6" r="2.2" fill="#1a3a9a"/>
<rect x="3" y="94.8" width="9.6" height="5.2" fill="#e8f0fc" stroke="#6a7ab0" stroke-width="0.5"/>
<text x="3.8" y="99" font-size="4.4" font-weight="bold" fill="#2a3a9a" textLength="8" lengthAdjust="spacingAndGlyphs">LBL</text>
<line x1="3" y1="105.0" x2="12" y2="105.0" stroke="#8890a0" stroke-width="0.8" />
<line x1="3" y1="107.6" x2="12" y2="107.6" stroke="#8890a0" stroke-width="0.8" />
<line x1="3" y1="110.2" x2="12" y2="110.2" stroke="#8890a0" stroke-width="0.8" />
<line x1="3" y1="112.8" x2="12" y2="112.8" stroke="#8890a0" stroke-width="0.8" />
<path d="M2.5,120.5 H12.5" stroke="#1848c0" stroke-width="2"/><path d="M4.5,116.5 V124.5 M10.5,116.5 V124.5" stroke="#1848c0" stroke-width="1.5"/>
<path d="M3.5,130.5 H11.5 V137.5 H3.5 Z" fill="#f0b020" stroke="#b07810" stroke-width="0.6"/><path d="M2.5,132 H4 M2.5,136 H4 M11,132 H12.5 M11,136 H12.5" stroke="#b07810" stroke-width="0.8"/>
<path d="M3,142.5 H10 L12,145.2 L10,148 H3 Z" fill="#f0b020" stroke="#b07810" stroke-width="0.6"/>
<path d="M5,155 L11,159 L5,163 Z" fill="none" stroke="#40b040" stroke-width="0.7"/><path d="M2,157 H5 M2,161 H5 M11,159 H13" stroke="#40b040" stroke-width="0.5"/>
<path d="M3,166 V176 H12.5" stroke="#555" stroke-width="0.6" fill="none"/><path d="M3.5,173 L6,168 L8,172 L10,169 L12,172" stroke="#e02020" stroke-width="0.7" fill="none"/><path d="M3.5,175 L6,171 L8.5,175 L12,171.5" stroke="#2040e0" stroke-width="0.8" fill="none"/>
<rect x="3" y="179" width="9.6" height="9.4" fill="#ffffff" stroke="#8090a0" stroke-width="0.5"/>
<rect x="3" y="179" width="9.6" height="2.4" fill="#1838c8" />
<circle cx="7.6" cy="195.7" r="4.6" fill="#b8c4d8" stroke="#7080a0" stroke-width="0.6"/><path d="M4.2,196.5 Q5.8,192 7.6,195.7 Q9.4,199.5 11,195" stroke="#1030c0" stroke-width="1.2" fill="none"/>
<path d="M3,213 L4,210 L10,203.5 L11.8,205.3 L5.5,211.8 Z" fill="#f0b820" stroke="#806020" stroke-width="0.5"/><path d="M10,203.5 Q13,203 12.5,207" stroke="#556" stroke-width="0.5" fill="none"/>
<path d="M3.5,219 Q3.5,215 7.5,215 Q11.5,215 11.5,219 V221 H3.5 Z" fill="#f4f4f4" stroke="#c03030" stroke-width="0.6"/>
<rect x="5" y="221" width="5" height="3.6" fill="#404850" />
<rect x="8.5" y="218" width="2" height="2" fill="#f0c020" />
<line x1="2" y1="227" x2="13.5" y2="227" stroke="#c0d0e0" stroke-width="0.6" />
<line x1="3.5" y1="237.5" x2="11.5" y2="228.5" stroke="#222" stroke-width="1" />
<rect x="3.5" y="241" width="8.5" height="8.5" fill="#30b8a0" stroke="#208878" stroke-width="0.5"/>
<circle cx="7.6" cy="258" r="4.4" fill="#30b8a0" stroke="#208878" stroke-width="0.5"/>
<path d="M3.5,265.5 Q10.5,265.5 11.5,274 H3.5 Z" fill="none" stroke="#7a80d0" stroke-width="0.6"/>
<path d="M5.5,278.5 Q9,277 8.5,280.5 Q12.5,280.5 11.5,284 Q10,287 6.5,286 Q3,287 3,283 Q3,279 5.5,278.5 Z" fill="#30b8a0" stroke="#208878" stroke-width="0.4"/>
<text x="2.3" y="299.2" font-size="10.5" font-family="Liberation Serif" fill="#111" stroke="#111" stroke-width="0.25">A</text>
<rect x="3.5" y="302" width="8.4" height="8.2" fill="#207a6a" stroke="#111" stroke-width="0.4"/>
<text x="5" y="308.9" font-size="6.6" font-weight="bold" fill="#111">S</text>
<path d="M7.5,313 V323 M2.5,318 H12.5" stroke="#556" stroke-width="0.5"/>
<rect x="5.5" y="316" width="4" height="4" fill="#207a6a" />
<line x1="2" y1="326.4" x2="13.5" y2="326.4" stroke="#c0d0e0" stroke-width="0.6" />
<path d="M4,338.5 Q3.5,333.5 8,333 Q11,333 11.5,336" stroke="#2870d0" stroke-width="1.4" fill="none"/><path d="M9.5,334.5 L12.5,336.5 L12.8,332.5 Z" fill="#2870d0"/>
<path d="M4,345 Q3.5,350.5 8,351 Q11.5,351 11.5,347.5" stroke="#2870d0" stroke-width="1.4" fill="none"/><path d="M9.5,348 L12.5,346 L12.8,350 Z" fill="#2870d0"/>
<rect x="1.5" y="355.3" width="13" height="6.4" fill="#ffffff" />
<text x="2.2" y="360.4" font-size="4.4" fill="#333" text-anchor="start" >0°</text>
<path d="M2.5,370.6 H12.5" stroke="#2870d0" stroke-width="1.5"/><path d="M2,370.6 L5,368 V373.2 Z M13,370.6 L10,368 V373.2 Z" fill="#2870d0"/>
<path d="M7.5,377.5 V388.5" stroke="#2870d0" stroke-width="1.5"/><path d="M7.5,377 L5,380 H10 Z M7.5,389 L5,386 H10 Z" fill="#2870d0"/>
<line x1="19.5" y1="56.3" x2="89.2" y2="56.3" stroke="#8a8a84" stroke-width="1" />
<rect x="20.3" y="57" width="18.3" height="15.5" fill="none" stroke="#a8a8a0" stroke-width="0.6" stroke-dasharray="1.2 0.8"/>
<rect x="26.5" y="57.5" width="5.7" height="11" fill="#e8e8dc" stroke="#6a6a6a" stroke-width="0.6"/>
<path d="M28.3,57.8 L29.3,59.2 L30.3,57.8 Z" fill="#555"/>
<rect x="23.1" y="57.8" width="1.6" height="10.6" fill="#5a5a5a" />
<rect x="34.2" y="57.8" width="1.6" height="10.6" fill="#5a5a5a" />
<rect x="21.8" y="69.5" width="2.6" height="1.2" fill="#666" />
<rect x="28" y="70" width="1.6" height="0.8" fill="#777" />
<rect x="32.5" y="70" width="2.4" height="0.8" fill="#777" />
<rect x="20.8" y="73.5" width="19.5" height="7.2" fill="none" stroke="#a8a8a0" stroke-width="0.6" stroke-dasharray="1.2 0.8"/>
<rect x="25.8" y="75.3" width="3.4" height="3.2" fill="#555" />
<rect x="29.3" y="75" width="8.8" height="3.8" fill="#ececdf" stroke="#444" stroke-width="0.7"/>
<rect x="32.6" y="75" width="1.6" height="3.8" fill="#444" />
<line x1="21.8" y1="82.3" x2="25.400000000000002" y2="82.3" stroke="#8a8a84" stroke-width="0.8" />
<line x1="29" y1="82.3" x2="32.6" y2="82.3" stroke="#8a8a84" stroke-width="0.8" />
<line x1="36" y1="82.3" x2="39.6" y2="82.3" stroke="#8a8a84" stroke-width="0.8" />
<rect x="47.3" y="63.4" width="9" height="1.4" fill="#6a6a64" />
<rect x="47.3" y="65.4" width="9" height="1.3" fill="#7a7a74" />
<line x1="47.5" y1="82.3" x2="56.5" y2="82.3" stroke="#8a8a84" stroke-width="0.8" />
<rect x="56.6" y="57.2" width="1.8" height="27" fill="#3a3a3a" />
<rect x="56.4" y="57" width="2.2" height="2" fill="#f0f0f0" />
<rect x="60.2" y="57.3" width="23.7" height="27" fill="#d8d8ca" stroke="#7a7a7a" stroke-width="0.8" stroke-dasharray="2.2 0.9"/>
<rect x="63.8" y="60.5" width="17.8" height="20.6" fill="#e2e2d6" stroke="#7a7a74" stroke-width="0.9"/>
<rect x="62.5" y="57" width="2" height="1.2" fill="#f4f4f0" />
<rect x="69.2" y="57" width="2" height="1.2" fill="#f4f4f0" />
<rect x="76" y="57" width="2" height="1.2" fill="#f4f4f0" />
<line x1="88.7" y1="56.5" x2="88.7" y2="100" stroke="#b0b0a8" stroke-width="0.6" />
<line x1="19.5" y1="96.1" x2="89" y2="96.1" stroke="#c4c4bc" stroke-width="0.6" />
<rect x="43.9" y="96.2" width="26.6" height="3.6" rx="0.6" fill="#e8e8dc" stroke="#555" stroke-width="0.8"/>
<line x1="49.5" y1="97.4" x2="65" y2="97.4" stroke="#333" stroke-width="0.7" />
<rect x="74.2" y="96.5" width="1.2" height="2.6" fill="#a0a098" />
<line x1="86.3" y1="96.2" x2="86.3" y2="100" stroke="#c8c8c0" stroke-width="0.5" />
</svg></body></html>
